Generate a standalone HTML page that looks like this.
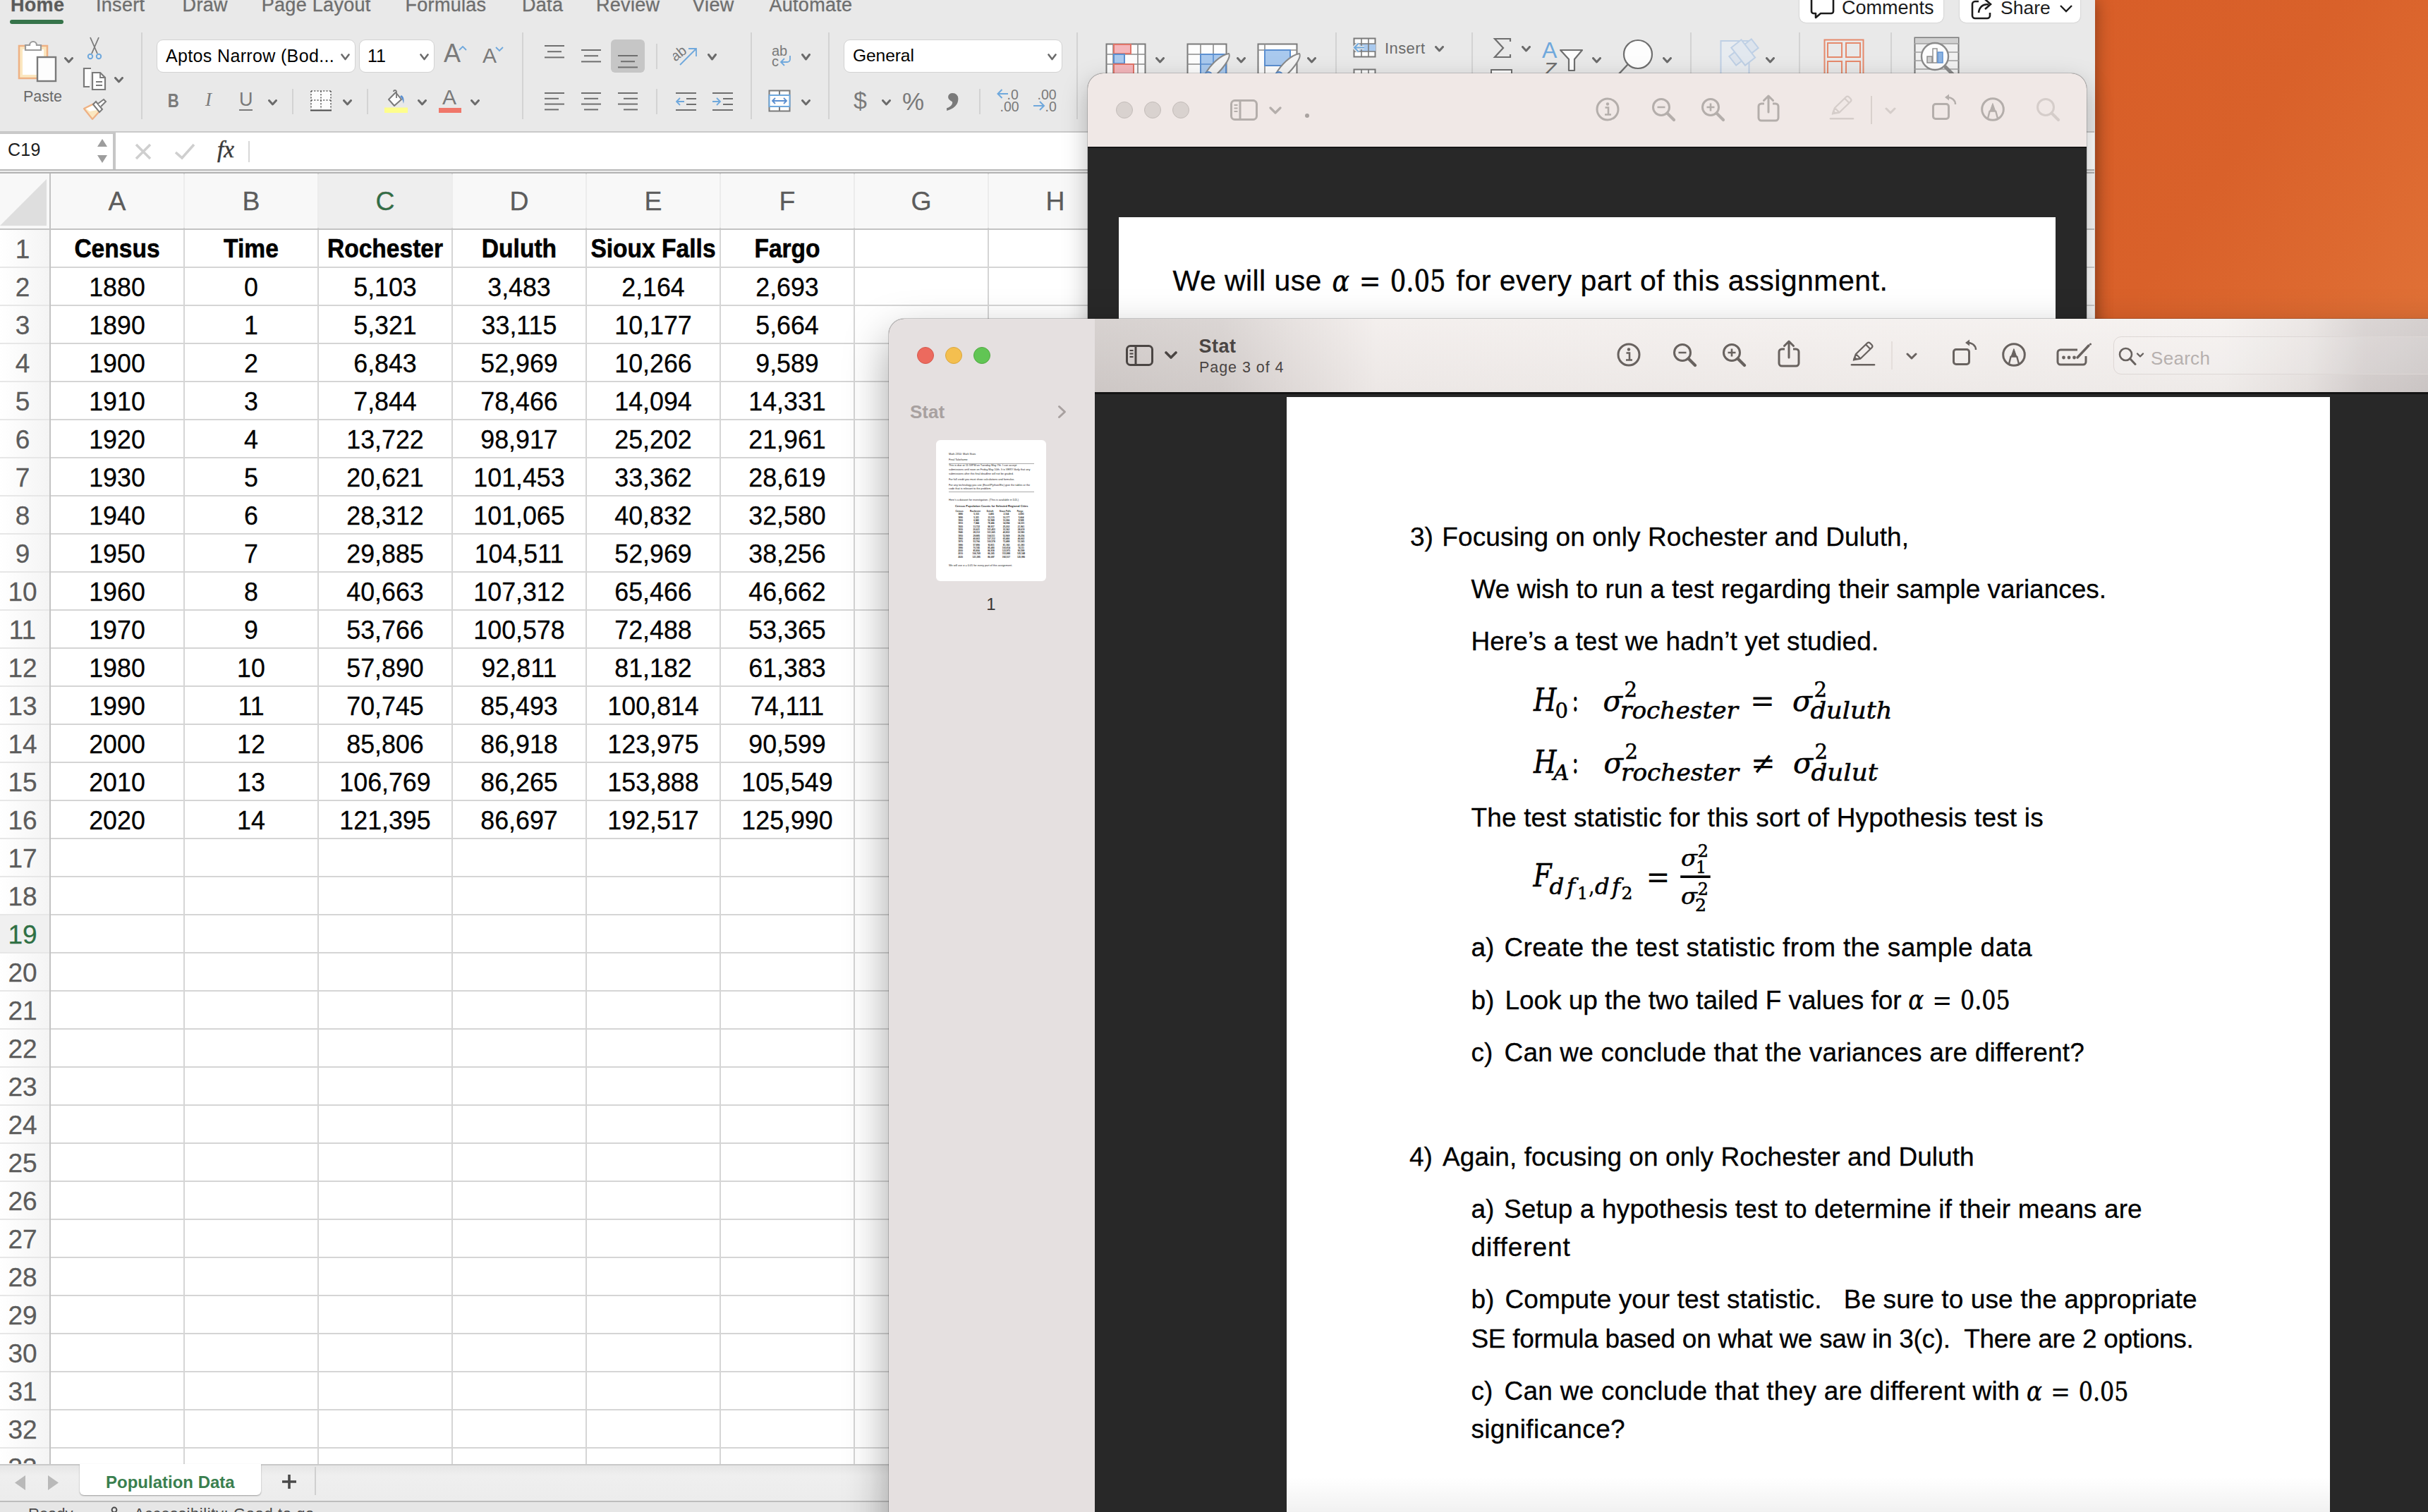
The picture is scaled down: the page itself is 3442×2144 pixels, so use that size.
<!DOCTYPE html><html><head><meta charset="utf-8"><title>Screenshot</title><style>
html,body{margin:0;padding:0}
body{width:3442px;height:2144px;position:relative;overflow:hidden;background:linear-gradient(115deg,#d95f29 0%,#d95f29 82%,#dc652e 90%,#e07035 100%);font-family:"Liberation Sans",sans-serif;}
.abs{position:absolute}
.t{position:absolute;white-space:nowrap;line-height:1}
#excel{position:absolute;left:0;top:0;width:2970px;height:2144px;background:#e9e9e9;overflow:hidden;box-shadow:0 0 22px rgba(0,0,0,.4)}
.tab{position:absolute;top:-6.5px;font-size:27px;color:#6f6f6f;white-space:nowrap;line-height:1;letter-spacing:0.3px;-webkit-text-stroke:0.35px #6f6f6f}
.sep{position:absolute;width:2px;background:#d3d3d3}
.box{position:absolute;background:#fff;border:1.5px solid #d2d2d2;border-radius:9px;box-sizing:border-box}
.gl{position:absolute;background:#d5d5d5}
.cell{position:absolute;width:250px;margin-left:-30px;text-align:center;font-size:37px;line-height:1;color:#000;white-space:nowrap;-webkit-text-stroke:0.3px #000;transform:scaleX(.967)}
.cellb{font-weight:bold;font-size:37.5px;transform:scaleX(.895);-webkit-text-stroke:0.6px #000}
.rn{position:absolute;left:-3px;width:70px;text-align:center;font-size:37px;color:#5c5c5c;line-height:1;letter-spacing:0px;-webkit-text-stroke:0.3px currentColor}
.cn{position:absolute;width:190px;text-align:center;font-size:37.4px;color:#5c5c5c;line-height:1;top:267.3px;-webkit-text-stroke:0.3px #5c5c5c}
.doc{position:absolute;white-space:nowrap;line-height:1;font-size:37px;color:#000;-webkit-text-stroke:0.3px #000}
.math{font-family:"DejaVu Serif","Liberation Serif",serif;font-style:italic}
</style></head><body>
<div class="abs" style="left:2960px;top:0;width:482px;height:460px;background:linear-gradient(125deg,#d85e28 0%,#d9612a 45%,#dd6930 75%,#e07137 100%)"></div>
<div id="excel">
<div class="tab" style="left:15.0px;font-weight:bold;color:#5a5a5a;">Home</div>
<div class="tab" style="left:136.0px;">Insert</div>
<div class="tab" style="left:258.6px;">Draw</div>
<div class="tab" style="left:370.7px;">Page Layout</div>
<div class="tab" style="left:574.5px;">Formulas</div>
<div class="tab" style="left:740.0px;">Data</div>
<div class="tab" style="left:845.0px;">Review</div>
<div class="tab" style="left:981.3px;">View</div>
<div class="tab" style="left:1090.4px;">Automate</div>
<div class="abs" style="left:14px;top:28px;width:76px;height:6px;border-radius:3px;background:#36744a"></div>
<div class="abs" style="left:2551px;top:-12px;width:204px;height:44px;background:#fff;border-radius:9px;box-shadow:0 0 2px rgba(0,0,0,.25)"></div>
<div class="t" style="left:2611px;top:-2.2px;font-size:27px;color:#1c1c1c">Comments</div>
<svg class="abs" style="left:2565px;top:0px" width="38" height="34" viewBox="0 0 38 34"><path d="M3 0 V16 a3 3 0 0 0 3 3 h3 v6 l7 -6 h15 a3 3 0 0 0 3 -3 V0" fill="none" stroke="#1c1c1c" stroke-width="2.6" stroke-linejoin="round"/></svg>
<div class="abs" style="left:2778px;top:-12px;width:171px;height:44px;background:#fff;border-radius:9px;box-shadow:0 0 2px rgba(0,0,0,.25)"></div>
<div class="t" style="left:2836px;top:-2.2px;font-size:26.5px;color:#1c1c1c">Share</div>
<svg class="abs" style="left:2793px;top:-2px" width="36" height="32" viewBox="0 0 36 32"><path d="M12 4 H7 a4 4 0 0 0 -4 4 V24 a4 4 0 0 0 4 4 H24 a4 4 0 0 0 4 -4 V20" fill="none" stroke="#1c1c1c" stroke-width="2.6"/><path d="M12 20 C13 11 19 8 26 8 M21 1 L29 8 L21 15" fill="none" stroke="#1c1c1c" stroke-width="2.6"/></svg>
<svg class="abs" style="left:2919px;top:5.5px" width="20" height="12" viewBox="0 0 20 12"><path d="M2 2 L10 10 L18 2" fill="none" stroke="#1c1c1c" stroke-width="2.4"/></svg>
<div class="sep" style="left:200px;top:46px;height:123px"></div>
<div class="sep" style="left:740px;top:46px;height:123px"></div>
<div class="sep" style="left:1064px;top:46px;height:123px"></div>
<div class="sep" style="left:1174px;top:46px;height:123px"></div>
<div class="sep" style="left:1526px;top:46px;height:123px"></div>
<div class="sep" style="left:1893px;top:46px;height:123px"></div>
<div class="sep" style="left:2086px;top:46px;height:123px"></div>
<div class="sep" style="left:2396px;top:46px;height:123px"></div>
<div class="sep" style="left:2550px;top:46px;height:123px"></div>
<div class="sep" style="left:2680px;top:46px;height:123px"></div>
<div class="sep" style="left:930px;top:62px;height:36px"></div>
<div class="sep" style="left:414px;top:126px;height:36px"></div>
<div class="sep" style="left:520px;top:126px;height:36px"></div>
<div class="sep" style="left:930px;top:126px;height:36px"></div>
<div class="sep" style="left:1388px;top:126px;height:36px"></div>
<svg class="abs" style="left:24px;top:54px" width="60" height="64" viewBox="0 0 60 64">
<rect x="3" y="11" width="40" height="46" fill="#fbe7c0" stroke="#eeb184" stroke-width="2.5"/>
<rect x="8" y="16" width="30" height="36" fill="#fff"/>
<path d="M12 17 V10 H18 a5 5 0 0 1 10 0 H34 V17 Z" fill="#fff" stroke="#9a9a9a" stroke-width="2.2"/>
<rect x="29" y="27" width="26" height="34" fill="#fdfdfd" stroke="#7a7a7a" stroke-width="2.4"/>
</svg>
<svg class="abs" style="left:90.5px;top:81.0px" width="13" height="9" viewBox="0 0 13 9"><path d="M1.5 1.5 L6.5 7.0 L11.5 1.5" fill="none" stroke="#6b6b6b" stroke-width="3.0" stroke-linecap="round" stroke-linejoin="round"/></svg>
<div class="t" style="left:33px;top:127px;font-size:21.5px;color:#6a6a6a;letter-spacing:0px">Paste</div>
<svg class="abs" style="left:122px;top:51px" width="24" height="36" viewBox="0 0 24 36">
<path d="M6 2 L16 25 M18 2 L8 25" stroke="#7a7a7a" stroke-width="1.8" fill="none"/>
<circle cx="6" cy="29" r="3.2" fill="none" stroke="#6fa8dc" stroke-width="2"/><circle cx="18" cy="29" r="3.2" fill="none" stroke="#6fa8dc" stroke-width="2"/></svg>
<svg class="abs" style="left:117px;top:95px" width="36" height="34" viewBox="0 0 36 34">
<path d="M10 28 H2 V2 H12" fill="#fdfdfd" stroke="#7a7a7a" stroke-width="2.2"/>
<path d="M14 8 H25 L32 15 V32 H14 Z" fill="#fdfdfd" stroke="#7a7a7a" stroke-width="2.2"/>
<path d="M25 8 V15 H32" fill="none" stroke="#7a7a7a" stroke-width="1.8"/>
<path d="M19 21 H28 M19 26 H28" stroke="#7a7a7a" stroke-width="1.8"/></svg>
<svg class="abs" style="left:162.0px;top:108.5px" width="13" height="9" viewBox="0 0 13 9"><path d="M1.5 1.5 L6.5 7.0 L11.5 1.5" fill="none" stroke="#6b6b6b" stroke-width="3.0" stroke-linecap="round" stroke-linejoin="round"/></svg>
<svg class="abs" style="left:117px;top:139px" width="36" height="32" viewBox="0 0 36 32">
<path d="M2 15 L16 8 L24 19 L14 30 Z" fill="#fbe7c0" stroke="#eeb184" stroke-width="2.2" stroke-linejoin="round"/>
<path d="M5 15 L16 10 L21 17 L10 19 Z" fill="#fff"/>
<path d="M15 9 L19 5 L28 16 L24 20 Z" fill="#fff" stroke="#7a7a7a" stroke-width="2"/>
<path d="M22 8 L30 2 L33 5 L26 12" fill="#fff" stroke="#7a7a7a" stroke-width="2"/></svg>
<div class="box" style="left:222px;top:56px;width:282px;height:47px"></div>
<div class="t" style="left:235px;top:67px;font-size:25px;color:#000;letter-spacing:0.35px">Aptos Narrow (Bod...</div>
<svg class="abs" style="left:482.5px;top:76.0px" width="13" height="10" viewBox="0 0 13 10"><path d="M1.5 1.5 L6.5 8.0 L11.5 1.5" fill="none" stroke="#6b6b6b" stroke-width="2.6" stroke-linecap="round" stroke-linejoin="round"/></svg>
<div class="box" style="left:509px;top:56px;width:107px;height:47px"></div>
<div class="t" style="left:521px;top:67px;font-size:25px;color:#000">11</div>
<svg class="abs" style="left:594.5px;top:76.0px" width="13" height="10" viewBox="0 0 13 10"><path d="M1.5 1.5 L6.5 8.0 L11.5 1.5" fill="none" stroke="#6b6b6b" stroke-width="2.6" stroke-linecap="round" stroke-linejoin="round"/></svg>
<div class="t" style="left:629px;top:58px;font-size:36px;color:#7a7a7a">A</div>
<svg class="abs" style="left:650px;top:65px" width="12" height="7" viewBox="0 0 12 7"><path d="M1 6 L6 1 L11 6" fill="none" stroke="#6fa8dc" stroke-width="1.8"/></svg>
<div class="t" style="left:684px;top:64px;font-size:30px;color:#7a7a7a">A</div>
<svg class="abs" style="left:702px;top:66px" width="12" height="7" viewBox="0 0 12 7"><path d="M1 1 L6 6 L11 1" fill="none" stroke="#6fa8dc" stroke-width="1.8"/></svg>
<svg class="abs" style="left:772.0px;top:64.0px" width="28" height="28"><rect x="0.0" y="0.0" width="28.0" height="2.0" fill="#6f6f6f"/><rect x="4.0" y="8.2" width="20.0" height="2.0" fill="#6f6f6f"/><rect x="0.0" y="16.4" width="28.0" height="2.0" fill="#6f6f6f"/></svg>
<svg class="abs" style="left:824.0px;top:70.0px" width="28" height="28"><rect x="0.0" y="0.0" width="28.0" height="2.0" fill="#6f6f6f"/><rect x="4.0" y="8.2" width="20.0" height="2.0" fill="#6f6f6f"/><rect x="0.0" y="16.4" width="28.0" height="2.0" fill="#6f6f6f"/></svg>
<div class="abs" style="left:866px;top:56px;width:48px;height:47px;background:#c6c6c6;border-radius:6px"></div>
<svg class="abs" style="left:876.0px;top:78.0px" width="28" height="28"><rect x="0.0" y="0.0" width="28.0" height="2.0" fill="#6f6f6f"/><rect x="4.0" y="8.2" width="20.0" height="2.0" fill="#6f6f6f"/><rect x="0.0" y="16.4" width="28.0" height="2.0" fill="#6f6f6f"/></svg>
<svg class="abs" style="left:954px;top:62px" width="36" height="32" viewBox="0 0 36 32">
<text x="0" y="20" font-size="20" fill="#7a7a7a" transform="rotate(-38 10 18)" font-family="Liberation Sans,sans-serif">ab</text>
<path d="M10 30 L32 8 M22 7 H33 V18" fill="none" stroke="#6fa8dc" stroke-width="1.8"/></svg>
<svg class="abs" style="left:1003.0px;top:76.0px" width="13" height="10" viewBox="0 0 13 10"><path d="M1.5 1.5 L6.5 8.0 L11.5 1.5" fill="none" stroke="#6b6b6b" stroke-width="3.0" stroke-linecap="round" stroke-linejoin="round"/></svg>
<div class="t" style="left:236px;top:129.5px;font-size:27px;font-weight:bold;color:#7a7a7a;transform:scaleX(.82)">B</div>
<div class="t" style="left:291px;top:128px;font-size:27px;font-style:italic;color:#7a7a7a;font-family:'Liberation Serif',serif">I</div>
<div class="t" style="left:339px;top:128px;font-size:27px;color:#7a7a7a">U</div>
<div class="abs" style="left:339px;top:155px;width:19px;height:2px;background:#7a7a7a"></div>
<svg class="abs" style="left:380.0px;top:141.0px" width="13" height="9" viewBox="0 0 13 9"><path d="M1.5 1.5 L6.5 7.0 L11.5 1.5" fill="none" stroke="#6b6b6b" stroke-width="3.0" stroke-linecap="round" stroke-linejoin="round"/></svg>
<svg class="abs" style="left:440px;top:128px" width="30" height="30" viewBox="0 0 30 30">
<rect x="1" y="1" width="28" height="26" fill="#fdfdfd"/>
<path d="M1 1 H29 M1 14 H29 M1 1 V27 M15 1 V27 M29 1 V27" stroke="#5a5a5a" stroke-width="1.6" stroke-dasharray="2 2.3" fill="none"/>
<path d="M0 28.5 H30" stroke="#4a4a4a" stroke-width="2"/></svg>
<svg class="abs" style="left:486.0px;top:141.0px" width="13" height="9" viewBox="0 0 13 9"><path d="M1.5 1.5 L6.5 7.0 L11.5 1.5" fill="none" stroke="#6b6b6b" stroke-width="3.0" stroke-linecap="round" stroke-linejoin="round"/></svg>
<svg class="abs" style="left:545px;top:127px" width="34" height="34" viewBox="0 0 34 34">
<path d="M6 14 L16 4 L24 14 L14 23 Z" fill="#fdfdfd" stroke="#7a7a7a" stroke-width="2" stroke-linejoin="round"/>
<path d="M17 12 V3 a2 2 0 0 0 -4 0" fill="none" stroke="#7a7a7a" stroke-width="1.8"/>
<path d="M24 8 C28 10 28 16 27 20 C26 15 25 12 22 10 Z" fill="#5b8fd0"/>
<rect x="0" y="25.5" width="33" height="7.5" fill="#fefe8c"/></svg>
<svg class="abs" style="left:592.0px;top:141.0px" width="13" height="9" viewBox="0 0 13 9"><path d="M1.5 1.5 L6.5 7.0 L11.5 1.5" fill="none" stroke="#6b6b6b" stroke-width="3.0" stroke-linecap="round" stroke-linejoin="round"/></svg>
<div class="t" style="left:627px;top:123px;font-size:30px;color:#7a7a7a">A</div>
<div class="abs" style="left:622px;top:152.5px;width:32px;height:7.5px;background:#f0776a"></div>
<svg class="abs" style="left:667.0px;top:141.0px" width="13" height="9" viewBox="0 0 13 9"><path d="M1.5 1.5 L6.5 7.0 L11.5 1.5" fill="none" stroke="#6b6b6b" stroke-width="3.0" stroke-linecap="round" stroke-linejoin="round"/></svg>
<svg class="abs" style="left:772.0px;top:130.5px" width="28" height="35"><rect x="0.0" y="0.0" width="28.0" height="2.0" fill="#6f6f6f"/><rect x="0.0" y="7.8" width="20.0" height="2.0" fill="#6f6f6f"/><rect x="0.0" y="15.6" width="28.0" height="2.0" fill="#6f6f6f"/><rect x="0.0" y="23.4" width="20.0" height="2.0" fill="#6f6f6f"/></svg>
<svg class="abs" style="left:824.0px;top:130.5px" width="28" height="35"><rect x="0.0" y="0.0" width="28.0" height="2.0" fill="#6f6f6f"/><rect x="4.0" y="7.8" width="20.0" height="2.0" fill="#6f6f6f"/><rect x="0.0" y="15.6" width="28.0" height="2.0" fill="#6f6f6f"/><rect x="4.0" y="23.4" width="20.0" height="2.0" fill="#6f6f6f"/></svg>
<svg class="abs" style="left:876.0px;top:130.5px" width="28" height="35"><rect x="0.0" y="0.0" width="28.0" height="2.0" fill="#6f6f6f"/><rect x="8.0" y="7.8" width="20.0" height="2.0" fill="#6f6f6f"/><rect x="0.0" y="15.6" width="28.0" height="2.0" fill="#6f6f6f"/><rect x="8.0" y="23.4" width="20.0" height="2.0" fill="#6f6f6f"/></svg>
<svg class="abs" style="left:957.5px;top:130.5px" width="30" height="28" viewBox="0 0 30 28"><rect x="0" y="0" width="29" height="2" fill="#6f6f6f"/><rect x="0" y="24" width="29" height="2" fill="#6f6f6f"/><rect x="15" y="8" width="14" height="2" fill="#6f6f6f"/><rect x="15" y="16" width="14" height="2" fill="#6f6f6f"/><path d="M12 13 H1 M6 8 L1 13 L6 18" fill="none" stroke="#6fa8dc" stroke-width="1.8"/></svg>
<svg class="abs" style="left:1009.5px;top:130.5px" width="30" height="28" viewBox="0 0 30 28"><rect x="0" y="0" width="29" height="2" fill="#6f6f6f"/><rect x="0" y="24" width="29" height="2" fill="#6f6f6f"/><rect x="15" y="8" width="14" height="2" fill="#6f6f6f"/><rect x="15" y="16" width="14" height="2" fill="#6f6f6f"/><path d="M0 13 H11 M6 8 L11 13 L6 18" fill="none" stroke="#6fa8dc" stroke-width="1.8"/></svg>
<svg class="abs" style="left:1092px;top:62px" width="34" height="36" viewBox="0 0 34 36">
<text x="2" y="17" font-size="20" fill="#7a7a7a" font-family="Liberation Sans,sans-serif">ab</text>
<text x="2" y="32" font-size="20" fill="#7a7a7a" font-family="Liberation Sans,sans-serif">c</text>
<path d="M28 17 V22 a4 4 0 0 1 -4 4 H15 M20 21 L15 26 L20 31" fill="none" stroke="#6fa8dc" stroke-width="1.8"/></svg>
<svg class="abs" style="left:1136.0px;top:76.0px" width="13" height="10" viewBox="0 0 13 10"><path d="M1.5 1.5 L6.5 8.0 L11.5 1.5" fill="none" stroke="#6b6b6b" stroke-width="3.0" stroke-linecap="round" stroke-linejoin="round"/></svg>
<svg class="abs" style="left:1089px;top:127px" width="32" height="32" viewBox="0 0 32 32">
<rect x="1.5" y="1.5" width="29" height="29" fill="#fdfdfd" stroke="#7a7a7a" stroke-width="2"/>
<path d="M16 1 V8 M16 24 V31" stroke="#7a7a7a" stroke-width="2"/>
<rect x="1.5" y="8" width="29" height="16" fill="#fdfdfd" stroke="#6fa8dc" stroke-width="2"/>
<path d="M6 16 H26 M10 12 L6 16 L10 20 M22 12 L26 16 L22 20" fill="none" stroke="#5b8fd0" stroke-width="1.8"/></svg>
<svg class="abs" style="left:1136.0px;top:141.0px" width="13" height="9" viewBox="0 0 13 9"><path d="M1.5 1.5 L6.5 7.0 L11.5 1.5" fill="none" stroke="#6b6b6b" stroke-width="3.0" stroke-linecap="round" stroke-linejoin="round"/></svg>
<div class="box" style="left:1196px;top:56px;width:310px;height:47px"></div>
<div class="t" style="left:1209px;top:67px;font-size:24.6px;color:#000;letter-spacing:-0.1px">General</div>
<svg class="abs" style="left:1484.5px;top:76.0px" width="13" height="10" viewBox="0 0 13 10"><path d="M1.5 1.5 L6.5 8.0 L11.5 1.5" fill="none" stroke="#6b6b6b" stroke-width="2.6" stroke-linecap="round" stroke-linejoin="round"/></svg>
<div class="t" style="left:1210px;top:125px;font-size:34px;color:#7a7a7a">$</div>
<svg class="abs" style="left:1250.0px;top:141.0px" width="13" height="9" viewBox="0 0 13 9"><path d="M1.5 1.5 L6.5 7.0 L11.5 1.5" fill="none" stroke="#6b6b6b" stroke-width="3.0" stroke-linecap="round" stroke-linejoin="round"/></svg>
<div class="t" style="left:1279px;top:126px;font-size:35px;color:#7a7a7a">%</div>
<div class="t" style="left:1341px;top:76.2px;font-size:82px;color:#7a7a7a;font-family:'Liberation Serif',serif;font-weight:bold">,</div>
<svg class="abs" style="left:1412px;top:124px" width="38" height="38" viewBox="0 0 38 38">
<text x="15.500" y="17" font-size="19.500" fill="#7a7a7a" font-family="Liberation Sans,sans-serif">.0</text>
<text x="5.500" y="34" font-size="19.500" fill="#7a7a7a" font-family="Liberation Sans,sans-serif">.00</text>
<path d="M17 9 H2.500 M8.500 3 L2.500 9 L8.500 15" fill="none" stroke="#6fa8dc" stroke-width="2"/></svg>
<svg class="abs" style="left:1464px;top:124px" width="38" height="38" viewBox="0 0 38 38">
<text x="6.500" y="17" font-size="19.500" fill="#7a7a7a" font-family="Liberation Sans,sans-serif">.00</text>
<text x="17.500" y="34" font-size="19.500" fill="#7a7a7a" font-family="Liberation Sans,sans-serif">.0</text>
<path d="M1 26 H16 M10 20 L16 26 L10 32" fill="none" stroke="#6fa8dc" stroke-width="2"/></svg>
<svg class="abs" style="left:1567px;top:61px" width="58" height="44" viewBox="0 0 58 44">
<rect x="1.5" y="1.5" width="55" height="50" fill="#fdfdfd" stroke="#7a7a7a" stroke-width="2"/>
<path d="M11 1 V50 M46 1 V50 M1 16 H57 M1 30 H57" stroke="#8a8a8a" stroke-width="1.6"/>
<rect x="12" y="2" width="24" height="13" fill="#f4b6bb" stroke="#e07468" stroke-width="2"/>
<rect x="12" y="16" width="15" height="13" fill="#a9c9ee" stroke="#5b8fd0" stroke-width="2"/>
<rect x="12" y="30" width="28" height="14" fill="#f4b6bb" stroke="#e07468" stroke-width="2"/></svg>
<svg class="abs" style="left:1638.0px;top:81.0px" width="13" height="9" viewBox="0 0 13 9"><path d="M1.5 1.5 L6.5 7.0 L11.5 1.5" fill="none" stroke="#6b6b6b" stroke-width="3.0" stroke-linecap="round" stroke-linejoin="round"/></svg>
<svg class="abs" style="left:1682px;top:61px" width="64" height="44" viewBox="0 0 64 44">
<rect x="1.5" y="1.5" width="55" height="50" fill="#fdfdfd" stroke="#7a7a7a" stroke-width="2"/>
<path d="M20 1 V50 M38 1 V50 M1 16 H57 M1 30 H57" stroke="#8a8a8a" stroke-width="1.6"/>
<rect x="20" y="16" width="36" height="30" fill="#a9c9ee" stroke="#5b8fd0" stroke-width="2"/>
<path d="M38 16 V44 M20 30 H56" stroke="#5b8fd0" stroke-width="1.6"/>
<path d="M25 47 C33 31 48 17 60 15 C63 19 56 32 40 47 Z" fill="#f4f4f4" stroke="#8a8a8a" stroke-width="2"/><circle cx="31" cy="46" r="5" fill="#a9c9ee" stroke="#5b8fd0" stroke-width="2"/></svg>
<svg class="abs" style="left:1753.0px;top:81.0px" width="13" height="9" viewBox="0 0 13 9"><path d="M1.5 1.5 L6.5 7.0 L11.5 1.5" fill="none" stroke="#6b6b6b" stroke-width="3.0" stroke-linecap="round" stroke-linejoin="round"/></svg>
<svg class="abs" style="left:1782px;top:61px" width="64" height="44" viewBox="0 0 64 44">
<rect x="1.5" y="1.5" width="55" height="50" fill="#fdfdfd" stroke="#7a7a7a" stroke-width="2"/>
<path d="M11 1 V50 M1 10 H57" stroke="#8a8a8a" stroke-width="1.6"/>
<rect x="11" y="10" width="36" height="22" fill="#a9c9ee" stroke="#5b8fd0" stroke-width="2"/>
<path d="M25 47 C33 31 48 17 60 15 C63 19 56 32 40 47 Z" fill="#f4f4f4" stroke="#8a8a8a" stroke-width="2"/><circle cx="31" cy="46" r="5" fill="#a9c9ee" stroke="#5b8fd0" stroke-width="2"/></svg>
<svg class="abs" style="left:1853.0px;top:81.0px" width="13" height="9" viewBox="0 0 13 9"><path d="M1.5 1.5 L6.5 7.0 L11.5 1.5" fill="none" stroke="#6b6b6b" stroke-width="3.0" stroke-linecap="round" stroke-linejoin="round"/></svg>
<svg class="abs" style="left:1918px;top:53px" width="34" height="30" viewBox="0 0 34 30">
<rect x="1.5" y="1.5" width="30" height="26" fill="#fdfdfd" stroke="#7a7a7a" stroke-width="2"/>
<rect x="9" y="9" width="23" height="11" fill="#a9c9ee"/>
<path d="M12 1 V28 M22 1 V28 M1 9 H32 M1 20 H32" stroke="#7a7a7a" stroke-width="1.6" fill="none"/>
<path d="M16 14.5 H2 M8 8.5 L2 14.5 L8 20.500" fill="none" stroke="#e9e9e9" stroke-width="5"/><path d="M16 14.5 H2 M8 8.5 L2 14.5 L8 20.500" fill="none" stroke="#6fa8dc" stroke-width="2"/></svg>
<div class="t" style="left:1963px;top:58px;font-size:22px;color:#6a6a6a;letter-spacing:0.4px">Insert</div>
<svg class="abs" style="left:2033.5px;top:65.0px" width="13" height="9" viewBox="0 0 13 9"><path d="M1.5 1.5 L6.5 7.0 L11.5 1.5" fill="none" stroke="#6b6b6b" stroke-width="3.0" stroke-linecap="round" stroke-linejoin="round"/></svg>
<svg class="abs" style="left:1918px;top:97px" width="34" height="10" viewBox="0 0 34 10">
<rect x="1.5" y="1.5" width="30" height="26" fill="#fdfdfd" stroke="#7a7a7a" stroke-width="2"/><path d="M12 1 V28 M22 1 V28" stroke="#7a7a7a" stroke-width="1.6"/></svg>
<svg class="abs" style="left:2116px;top:53px" width="28" height="30" viewBox="0 0 28 30">
<path d="M25 6 V2 H3 L15 15 L3 28 H25 V24" fill="none" stroke="#6f6f6f" stroke-width="2.2" stroke-linejoin="miter"/></svg>
<svg class="abs" style="left:2157.0px;top:65.0px" width="13" height="9" viewBox="0 0 13 9"><path d="M1.5 1.5 L6.5 7.0 L11.5 1.5" fill="none" stroke="#6b6b6b" stroke-width="3.0" stroke-linecap="round" stroke-linejoin="round"/></svg>
<div class="abs" style="left:2113px;top:98px;width:31px;height:8px;border:2.2px solid #6f6f6f;box-sizing:border-box;background:#fdfdfd"></div>
<div class="t" style="left:2186px;top:55px;font-size:32px;color:#6fa8dc">A</div>
<div class="t" style="left:2188px;top:84px;font-size:30px;color:#6f6f6f;font-style:italic">Z</div>
<svg class="abs" style="left:2210px;top:69px" width="36" height="36" viewBox="0 0 36 36">
<path d="M2 2 H33 L22 15 V31 H14 V15 Z" fill="#fdfdfd" stroke="#6f6f6f" stroke-width="2.2" stroke-linejoin="round"/></svg>
<svg class="abs" style="left:2257.0px;top:81.0px" width="13" height="9" viewBox="0 0 13 9"><path d="M1.5 1.5 L6.5 7.0 L11.5 1.5" fill="none" stroke="#6b6b6b" stroke-width="3.0" stroke-linecap="round" stroke-linejoin="round"/></svg>
<svg class="abs" style="left:2290px;top:54px" width="56" height="52" viewBox="0 0 56 52">
<path d="M18 37 L2 54" stroke="#6f6f6f" stroke-width="2.4"/><circle cx="32" cy="23" r="20" fill="#fdfdfd" stroke="#6f6f6f" stroke-width="2.2"/></svg>
<svg class="abs" style="left:2357.0px;top:81.0px" width="13" height="9" viewBox="0 0 13 9"><path d="M1.5 1.5 L6.5 7.0 L11.5 1.5" fill="none" stroke="#6b6b6b" stroke-width="3.0" stroke-linecap="round" stroke-linejoin="round"/></svg>
<svg class="abs" style="left:2438px;top:52px;opacity:.45" width="58" height="54" viewBox="0 0 58 54">
<rect x="1.5" y="6" width="40" height="50" fill="#e8f0fa" stroke="#8db4e2" stroke-width="2"/>
<g transform="rotate(-38 34 22)"><rect x="14" y="14" width="40" height="16" fill="#cfe0f3" stroke="#8db4e2" stroke-width="2"/><rect x="24" y="6" width="18" height="32" fill="#dbe8f7" stroke="#8db4e2" stroke-width="2"/></g></svg>
<svg class="abs" style="left:2503.0px;top:81.0px" width="13" height="9" viewBox="0 0 13 9"><path d="M1.5 1.5 L6.5 7.0 L11.5 1.5" fill="none" stroke="#6b6b6b" stroke-width="3.0" stroke-linecap="round" stroke-linejoin="round"/></svg>
<svg class="abs" style="left:2585px;top:55px" width="60" height="50" viewBox="0 0 60 50">
<rect x="1.5" y="1.5" width="55" height="55" fill="none" stroke="#e58a6c" stroke-width="2"/>
<rect x="6" y="6" width="20" height="20" fill="none" stroke="#e58a6c" stroke-width="2"/><rect x="32" y="6" width="20" height="20" fill="none" stroke="#e58a6c" stroke-width="2"/>
<rect x="6" y="32" width="20" height="20" fill="none" stroke="#e58a6c" stroke-width="2"/><rect x="32" y="32" width="20" height="20" fill="none" stroke="#e58a6c" stroke-width="2"/></svg>
<svg class="abs" style="left:2713px;top:52px" width="66" height="54" viewBox="0 0 66 54">
<rect x="1.5" y="1.5" width="62" height="60" fill="#f1f1f1" stroke="#7a7a7a" stroke-width="2"/>
<rect x="2" y="2" width="61" height="8" fill="#d0d0d0"/>
<path d="M1 10 H64 M1 22 H64 M1 34 H64 M1 46 H64" stroke="#a0a0a0" stroke-width="1.6"/>
<path d="M44 42 L56 54" stroke="#8a8a8a" stroke-width="5"/>
<circle cx="30" cy="28" r="19" fill="#fdfdfd" stroke="#8a8a8a" stroke-width="2.4"/>
<rect x="19" y="28" width="7" height="9" fill="#d0d0d0" stroke="#8a8a8a" stroke-width="1.4"/><rect x="27" y="17" width="6" height="20" fill="#fdfdfd" stroke="#8a8a8a" stroke-width="1.4"/><rect x="34" y="22" width="7" height="15" fill="#8db4e2" stroke="#5b8fd0" stroke-width="1.4"/></svg>
<div class="abs" style="left:0;top:186px;width:2969px;height:60px;background:#fff"></div>
<div class="abs" style="left:0;top:186px;width:162px;height:4px;background:#c9c9c9"></div>
<div class="abs" style="left:162px;top:186px;width:2807px;height:2px;background:#c9c9c9"></div>
<div class="abs" style="left:160px;top:188px;width:4px;height:52px;background:#c6c6c6"></div>
<div class="abs" style="left:0;top:240px;width:2969px;height:2px;background:#b9b9b9"></div>
<div class="abs" style="left:0;top:242px;width:2969px;height:2px;background:#ededed"></div>
<div class="abs" style="left:0;top:244px;width:2969px;height:2px;background:#b3b3b3"></div>
<div class="t" style="left:11px;top:200px;font-size:25px;color:#1c1c1c;letter-spacing:0.3px">C19</div>
<svg class="abs" style="left:137px;top:196px" width="16" height="36" viewBox="0 0 16 36"><path d="M1 12 L8 1 L15 12 Z M1 24 L8 35 L15 24 Z" fill="#9d9d9d"/></svg>
<svg class="abs" style="left:191px;top:203px" width="24" height="24" viewBox="0 0 24 24"><path d="M2 2 L22 22 M22 2 L2 22" stroke="#cfcfcf" stroke-width="3.6"/></svg>
<svg class="abs" style="left:247px;top:203px" width="30" height="24" viewBox="0 0 30 24"><path d="M2 13 L11 21 L28 2" fill="none" stroke="#cfcfcf" stroke-width="3.6"/></svg>
<div class="t" style="left:308px;top:196px;font-size:33px;color:#3a3a3a;font-family:'Liberation Serif',serif;font-style:italic;-webkit-text-stroke:0.5px #3a3a3a">fx</div>
<div class="abs" style="left:352px;top:200px;width:1.5px;height:30px;background:#d8d8d8"></div>
<div class="abs" style="left:0;top:246px;width:2969px;height:1830px;background:#fff"></div>
<div class="abs" style="left:0;top:246px;width:2969px;height:78px;background:#f8f8f8"></div>
<div class="abs" style="left:0;top:326px;width:70px;height:1750px;background:linear-gradient(90deg,#fff,#f4f4f4)"></div>
<div class="abs" style="left:452px;top:246px;width:188px;height:78px;background:#eeeeee"></div>
<div class="abs" style="left:0;top:1298px;width:70px;height:52px;background:#f0f0f0"></div>
<svg class="abs" style="left:0;top:254px" width="68" height="68" viewBox="0 0 68 68"><path d="M66 0 V66 H0 Z" fill="#dedede"/></svg>
<div class="gl" style="left:70px;top:246px;width:2px;height:1830px"></div>
<div class="gl" style="left:260px;top:246px;width:2px;height:1830px"></div>
<div class="gl" style="left:450px;top:246px;width:2px;height:1830px"></div>
<div class="gl" style="left:640px;top:246px;width:2px;height:1830px"></div>
<div class="gl" style="left:830px;top:246px;width:2px;height:1830px"></div>
<div class="gl" style="left:1020px;top:246px;width:2px;height:1830px"></div>
<div class="gl" style="left:1210px;top:246px;width:2px;height:1830px"></div>
<div class="gl" style="left:1400px;top:246px;width:2px;height:1830px"></div>
<div class="gl" style="left:1590px;top:246px;width:2px;height:1830px"></div>
<div class="gl" style="left:0;top:324px;width:2969px;height:2px"></div>
<div class="gl" style="left:0;top:378px;width:2969px;height:2px"></div>
<div class="gl" style="left:0;top:432px;width:2969px;height:2px"></div>
<div class="gl" style="left:0;top:486px;width:2969px;height:2px"></div>
<div class="gl" style="left:0;top:540px;width:2969px;height:2px"></div>
<div class="gl" style="left:0;top:594px;width:2969px;height:2px"></div>
<div class="gl" style="left:0;top:648px;width:2969px;height:2px"></div>
<div class="gl" style="left:0;top:702px;width:2969px;height:2px"></div>
<div class="gl" style="left:0;top:756px;width:2969px;height:2px"></div>
<div class="gl" style="left:0;top:810px;width:2969px;height:2px"></div>
<div class="gl" style="left:0;top:864px;width:2969px;height:2px"></div>
<div class="gl" style="left:0;top:918px;width:2969px;height:2px"></div>
<div class="gl" style="left:0;top:972px;width:2969px;height:2px"></div>
<div class="gl" style="left:0;top:1026px;width:2969px;height:2px"></div>
<div class="gl" style="left:0;top:1080px;width:2969px;height:2px"></div>
<div class="gl" style="left:0;top:1134px;width:2969px;height:2px"></div>
<div class="gl" style="left:0;top:1188px;width:2969px;height:2px"></div>
<div class="gl" style="left:0;top:1242px;width:2969px;height:2px"></div>
<div class="gl" style="left:0;top:1296px;width:2969px;height:2px"></div>
<div class="gl" style="left:0;top:1350px;width:2969px;height:2px"></div>
<div class="gl" style="left:0;top:1404px;width:2969px;height:2px"></div>
<div class="gl" style="left:0;top:1458px;width:2969px;height:2px"></div>
<div class="gl" style="left:0;top:1512px;width:2969px;height:2px"></div>
<div class="gl" style="left:0;top:1566px;width:2969px;height:2px"></div>
<div class="gl" style="left:0;top:1620px;width:2969px;height:2px"></div>
<div class="gl" style="left:0;top:1674px;width:2969px;height:2px"></div>
<div class="gl" style="left:0;top:1728px;width:2969px;height:2px"></div>
<div class="gl" style="left:0;top:1782px;width:2969px;height:2px"></div>
<div class="gl" style="left:0;top:1836px;width:2969px;height:2px"></div>
<div class="gl" style="left:0;top:1890px;width:2969px;height:2px"></div>
<div class="gl" style="left:0;top:1944px;width:2969px;height:2px"></div>
<div class="gl" style="left:0;top:1998px;width:2969px;height:2px"></div>
<div class="gl" style="left:0;top:2052px;width:2969px;height:2px"></div>
<div class="abs" style="left:0;top:378px;width:70px;height:2px;background:#e7e7e7"></div>
<div class="abs" style="left:0;top:432px;width:70px;height:2px;background:#e7e7e7"></div>
<div class="abs" style="left:0;top:486px;width:70px;height:2px;background:#e7e7e7"></div>
<div class="abs" style="left:0;top:540px;width:70px;height:2px;background:#e7e7e7"></div>
<div class="abs" style="left:0;top:594px;width:70px;height:2px;background:#e7e7e7"></div>
<div class="abs" style="left:0;top:648px;width:70px;height:2px;background:#e7e7e7"></div>
<div class="abs" style="left:0;top:702px;width:70px;height:2px;background:#e7e7e7"></div>
<div class="abs" style="left:0;top:756px;width:70px;height:2px;background:#e7e7e7"></div>
<div class="abs" style="left:0;top:810px;width:70px;height:2px;background:#e7e7e7"></div>
<div class="abs" style="left:0;top:864px;width:70px;height:2px;background:#e7e7e7"></div>
<div class="abs" style="left:0;top:918px;width:70px;height:2px;background:#e7e7e7"></div>
<div class="abs" style="left:0;top:972px;width:70px;height:2px;background:#e7e7e7"></div>
<div class="abs" style="left:0;top:1026px;width:70px;height:2px;background:#e7e7e7"></div>
<div class="abs" style="left:0;top:1080px;width:70px;height:2px;background:#e7e7e7"></div>
<div class="abs" style="left:0;top:1134px;width:70px;height:2px;background:#e7e7e7"></div>
<div class="abs" style="left:0;top:1188px;width:70px;height:2px;background:#e7e7e7"></div>
<div class="abs" style="left:0;top:1242px;width:70px;height:2px;background:#e7e7e7"></div>
<div class="abs" style="left:0;top:1296px;width:70px;height:2px;background:#e7e7e7"></div>
<div class="abs" style="left:0;top:1350px;width:70px;height:2px;background:#e7e7e7"></div>
<div class="abs" style="left:0;top:1404px;width:70px;height:2px;background:#e7e7e7"></div>
<div class="abs" style="left:0;top:1458px;width:70px;height:2px;background:#e7e7e7"></div>
<div class="abs" style="left:0;top:1512px;width:70px;height:2px;background:#e7e7e7"></div>
<div class="abs" style="left:0;top:1566px;width:70px;height:2px;background:#e7e7e7"></div>
<div class="abs" style="left:0;top:1620px;width:70px;height:2px;background:#e7e7e7"></div>
<div class="abs" style="left:0;top:1674px;width:70px;height:2px;background:#e7e7e7"></div>
<div class="abs" style="left:0;top:1728px;width:70px;height:2px;background:#e7e7e7"></div>
<div class="abs" style="left:0;top:1782px;width:70px;height:2px;background:#e7e7e7"></div>
<div class="abs" style="left:0;top:1836px;width:70px;height:2px;background:#e7e7e7"></div>
<div class="abs" style="left:0;top:1890px;width:70px;height:2px;background:#e7e7e7"></div>
<div class="abs" style="left:0;top:1944px;width:70px;height:2px;background:#e7e7e7"></div>
<div class="abs" style="left:0;top:1998px;width:70px;height:2px;background:#e7e7e7"></div>
<div class="abs" style="left:0;top:2052px;width:70px;height:2px;background:#e7e7e7"></div>
<div class="abs" style="left:70px;top:246px;width:2px;height:1830px;background:#c3c3c3"></div>
<div class="abs" style="left:0;top:324px;width:2969px;height:2px;background:#c3c3c3"></div>
<div class="abs" style="left:260px;top:247px;width:2px;height:76px;background:#ececec"></div>
<div class="abs" style="left:450px;top:247px;width:2px;height:76px;background:#ececec"></div>
<div class="abs" style="left:640px;top:247px;width:2px;height:76px;background:#ececec"></div>
<div class="abs" style="left:830px;top:247px;width:2px;height:76px;background:#ececec"></div>
<div class="abs" style="left:1020px;top:247px;width:2px;height:76px;background:#ececec"></div>
<div class="abs" style="left:1210px;top:247px;width:2px;height:76px;background:#ececec"></div>
<div class="abs" style="left:1400px;top:247px;width:2px;height:76px;background:#ececec"></div>
<div class="abs" style="left:1590px;top:247px;width:2px;height:76px;background:#ececec"></div>
<div class="cn" style="left:71px;color:#5c5c5c">A</div>
<div class="cn" style="left:261px;color:#5c5c5c">B</div>
<div class="cn" style="left:451px;color:#2f7044">C</div>
<div class="cn" style="left:641px;color:#5c5c5c">D</div>
<div class="cn" style="left:831px;color:#5c5c5c">E</div>
<div class="cn" style="left:1021px;color:#5c5c5c">F</div>
<div class="cn" style="left:1211px;color:#5c5c5c">G</div>
<div class="cn" style="left:1401px;color:#5c5c5c">H</div>
<div class="rn" style="top:335px;color:#5c5c5c">1</div>
<div class="rn" style="top:389px;color:#5c5c5c">2</div>
<div class="rn" style="top:443px;color:#5c5c5c">3</div>
<div class="rn" style="top:497px;color:#5c5c5c">4</div>
<div class="rn" style="top:551px;color:#5c5c5c">5</div>
<div class="rn" style="top:605px;color:#5c5c5c">6</div>
<div class="rn" style="top:659px;color:#5c5c5c">7</div>
<div class="rn" style="top:713px;color:#5c5c5c">8</div>
<div class="rn" style="top:767px;color:#5c5c5c">9</div>
<div class="rn" style="top:821px;color:#5c5c5c">10</div>
<div class="rn" style="top:875px;color:#5c5c5c">11</div>
<div class="rn" style="top:929px;color:#5c5c5c">12</div>
<div class="rn" style="top:983px;color:#5c5c5c">13</div>
<div class="rn" style="top:1037px;color:#5c5c5c">14</div>
<div class="rn" style="top:1091px;color:#5c5c5c">15</div>
<div class="rn" style="top:1145px;color:#5c5c5c">16</div>
<div class="rn" style="top:1199px;color:#5c5c5c">17</div>
<div class="rn" style="top:1253px;color:#5c5c5c">18</div>
<div class="rn" style="top:1307px;color:#2f7044">19</div>
<div class="rn" style="top:1361px;color:#5c5c5c">20</div>
<div class="rn" style="top:1415px;color:#5c5c5c">21</div>
<div class="rn" style="top:1469px;color:#5c5c5c">22</div>
<div class="rn" style="top:1523px;color:#5c5c5c">23</div>
<div class="rn" style="top:1577px;color:#5c5c5c">24</div>
<div class="rn" style="top:1631px;color:#5c5c5c">25</div>
<div class="rn" style="top:1685px;color:#5c5c5c">26</div>
<div class="rn" style="top:1739px;color:#5c5c5c">27</div>
<div class="rn" style="top:1793px;color:#5c5c5c">28</div>
<div class="rn" style="top:1847px;color:#5c5c5c">29</div>
<div class="rn" style="top:1901px;color:#5c5c5c">30</div>
<div class="rn" style="top:1955px;color:#5c5c5c">31</div>
<div class="rn" style="top:2009px;color:#5c5c5c">32</div>
<div class="rn" style="top:2063px;color:#5c5c5c">33</div>
<div class="cell cellb" style="left:71px;top:334.4px">Census</div>
<div class="cell cellb" style="left:261px;top:334.4px">Time</div>
<div class="cell cellb" style="left:451px;top:334.4px">Rochester</div>
<div class="cell cellb" style="left:641px;top:334.4px">Duluth</div>
<div class="cell cellb" style="left:831px;top:334.4px">Sioux Falls</div>
<div class="cell cellb" style="left:1021px;top:334.4px">Fargo</div>
<div class="cell" style="left:71px;top:389.0px">1880</div>
<div class="cell" style="left:261px;top:389.0px">0</div>
<div class="cell" style="left:451px;top:389.0px">5,103</div>
<div class="cell" style="left:641px;top:389.0px">3,483</div>
<div class="cell" style="left:831px;top:389.0px">2,164</div>
<div class="cell" style="left:1021px;top:389.0px">2,693</div>
<div class="cell" style="left:71px;top:443.0px">1890</div>
<div class="cell" style="left:261px;top:443.0px">1</div>
<div class="cell" style="left:451px;top:443.0px">5,321</div>
<div class="cell" style="left:641px;top:443.0px">33,115</div>
<div class="cell" style="left:831px;top:443.0px">10,177</div>
<div class="cell" style="left:1021px;top:443.0px">5,664</div>
<div class="cell" style="left:71px;top:497.0px">1900</div>
<div class="cell" style="left:261px;top:497.0px">2</div>
<div class="cell" style="left:451px;top:497.0px">6,843</div>
<div class="cell" style="left:641px;top:497.0px">52,969</div>
<div class="cell" style="left:831px;top:497.0px">10,266</div>
<div class="cell" style="left:1021px;top:497.0px">9,589</div>
<div class="cell" style="left:71px;top:551.0px">1910</div>
<div class="cell" style="left:261px;top:551.0px">3</div>
<div class="cell" style="left:451px;top:551.0px">7,844</div>
<div class="cell" style="left:641px;top:551.0px">78,466</div>
<div class="cell" style="left:831px;top:551.0px">14,094</div>
<div class="cell" style="left:1021px;top:551.0px">14,331</div>
<div class="cell" style="left:71px;top:605.0px">1920</div>
<div class="cell" style="left:261px;top:605.0px">4</div>
<div class="cell" style="left:451px;top:605.0px">13,722</div>
<div class="cell" style="left:641px;top:605.0px">98,917</div>
<div class="cell" style="left:831px;top:605.0px">25,202</div>
<div class="cell" style="left:1021px;top:605.0px">21,961</div>
<div class="cell" style="left:71px;top:659.0px">1930</div>
<div class="cell" style="left:261px;top:659.0px">5</div>
<div class="cell" style="left:451px;top:659.0px">20,621</div>
<div class="cell" style="left:641px;top:659.0px">101,453</div>
<div class="cell" style="left:831px;top:659.0px">33,362</div>
<div class="cell" style="left:1021px;top:659.0px">28,619</div>
<div class="cell" style="left:71px;top:713.0px">1940</div>
<div class="cell" style="left:261px;top:713.0px">6</div>
<div class="cell" style="left:451px;top:713.0px">28,312</div>
<div class="cell" style="left:641px;top:713.0px">101,065</div>
<div class="cell" style="left:831px;top:713.0px">40,832</div>
<div class="cell" style="left:1021px;top:713.0px">32,580</div>
<div class="cell" style="left:71px;top:767.0px">1950</div>
<div class="cell" style="left:261px;top:767.0px">7</div>
<div class="cell" style="left:451px;top:767.0px">29,885</div>
<div class="cell" style="left:641px;top:767.0px">104,511</div>
<div class="cell" style="left:831px;top:767.0px">52,969</div>
<div class="cell" style="left:1021px;top:767.0px">38,256</div>
<div class="cell" style="left:71px;top:821.0px">1960</div>
<div class="cell" style="left:261px;top:821.0px">8</div>
<div class="cell" style="left:451px;top:821.0px">40,663</div>
<div class="cell" style="left:641px;top:821.0px">107,312</div>
<div class="cell" style="left:831px;top:821.0px">65,466</div>
<div class="cell" style="left:1021px;top:821.0px">46,662</div>
<div class="cell" style="left:71px;top:875.0px">1970</div>
<div class="cell" style="left:261px;top:875.0px">9</div>
<div class="cell" style="left:451px;top:875.0px">53,766</div>
<div class="cell" style="left:641px;top:875.0px">100,578</div>
<div class="cell" style="left:831px;top:875.0px">72,488</div>
<div class="cell" style="left:1021px;top:875.0px">53,365</div>
<div class="cell" style="left:71px;top:929.0px">1980</div>
<div class="cell" style="left:261px;top:929.0px">10</div>
<div class="cell" style="left:451px;top:929.0px">57,890</div>
<div class="cell" style="left:641px;top:929.0px">92,811</div>
<div class="cell" style="left:831px;top:929.0px">81,182</div>
<div class="cell" style="left:1021px;top:929.0px">61,383</div>
<div class="cell" style="left:71px;top:983.0px">1990</div>
<div class="cell" style="left:261px;top:983.0px">11</div>
<div class="cell" style="left:451px;top:983.0px">70,745</div>
<div class="cell" style="left:641px;top:983.0px">85,493</div>
<div class="cell" style="left:831px;top:983.0px">100,814</div>
<div class="cell" style="left:1021px;top:983.0px">74,111</div>
<div class="cell" style="left:71px;top:1037.0px">2000</div>
<div class="cell" style="left:261px;top:1037.0px">12</div>
<div class="cell" style="left:451px;top:1037.0px">85,806</div>
<div class="cell" style="left:641px;top:1037.0px">86,918</div>
<div class="cell" style="left:831px;top:1037.0px">123,975</div>
<div class="cell" style="left:1021px;top:1037.0px">90,599</div>
<div class="cell" style="left:71px;top:1091.0px">2010</div>
<div class="cell" style="left:261px;top:1091.0px">13</div>
<div class="cell" style="left:451px;top:1091.0px">106,769</div>
<div class="cell" style="left:641px;top:1091.0px">86,265</div>
<div class="cell" style="left:831px;top:1091.0px">153,888</div>
<div class="cell" style="left:1021px;top:1091.0px">105,549</div>
<div class="cell" style="left:71px;top:1145.0px">2020</div>
<div class="cell" style="left:261px;top:1145.0px">14</div>
<div class="cell" style="left:451px;top:1145.0px">121,395</div>
<div class="cell" style="left:641px;top:1145.0px">86,697</div>
<div class="cell" style="left:831px;top:1145.0px">192,517</div>
<div class="cell" style="left:1021px;top:1145.0px">125,990</div>
<div class="abs" style="left:0;top:2076px;width:2969px;height:53px;background:linear-gradient(#e4e4e4,#efefef 30%,#ececec)"></div>
<div class="abs" style="left:0;top:2076px;width:2969px;height:2px;background:#c9c9c9"></div>
<div class="abs" style="left:113px;top:2076px;width:257px;height:44px;background:#fff;border-radius:0 0 6px 6px;box-shadow:0 1px 2px rgba(0,0,0,.35)"></div>
<div class="t" style="left:150px;top:2090px;font-size:24px;font-weight:bold;color:#3a7f4f">Population Data</div>
<svg class="abs" style="left:400px;top:2091px" width="20" height="20" viewBox="0 0 20 20"><path d="M10 0 V20 M0 10 H20" stroke="#4a4a4a" stroke-width="3.6"/></svg>
<div class="abs" style="left:446px;top:2080px;width:2px;height:40px;background:#d0d0d0"></div>
<svg class="abs" style="left:21px;top:2092px" width="64" height="22" viewBox="0 0 64 22"><path d="M15 0 V21 L0 10.5 Z M47 0 V21 L62 10.5 Z" fill="#b9b9b9"/></svg>
<div class="abs" style="left:0;top:2129px;width:2969px;height:15px;background:#e6e6e6"></div>
<div class="abs" style="left:0;top:2128px;width:2969px;height:2px;background:#bdbdbd"></div>
<div class="t" style="left:40px;top:2136.3px;font-size:22px;color:#4a4a4a">Ready</div>
<div class="t" style="left:190px;top:2136.3px;font-size:22px;color:#4a4a4a;letter-spacing:0.6px">Accessibility: Good to go</div>
<svg class="abs" style="left:147px;top:2135.5px" width="30" height="14" viewBox="0 0 30 14"><circle cx="15" cy="5" r="3.4" fill="none" stroke="#4a4a4a" stroke-width="2"/><path d="M2 12 C8 8 22 8 28 12" fill="none" stroke="#4a4a4a" stroke-width="2"/></svg>
</div>
<div id="pv1" class="abs" style="left:1542px;top:104px;width:1416px;height:700px;background:#282828;border-radius:22px 22px 0 0;overflow:hidden;box-shadow:0 14px 36px rgba(0,0,0,.26),0 0 0 1px rgba(0,0,0,.16)">
<div class="abs" style="left:0;top:0;width:1416px;height:104px;background:#f0e8e6"></div>
<div class="abs" style="left:0;top:104px;width:1416px;height:1.5px;background:#161616"></div>
<div class="abs" style="left:40px;top:40px;width:22px;height:22px;border-radius:50%;background:#d9d2cf;border:1px solid #c3bcb9"></div>
<div class="abs" style="left:80px;top:40px;width:22px;height:22px;border-radius:50%;background:#d9d2cf;border:1px solid #c3bcb9"></div>
<div class="abs" style="left:120px;top:40px;width:22px;height:22px;border-radius:50%;background:#d9d2cf;border:1px solid #c3bcb9"></div>
<svg class="abs" style="left:202.0px;top:37.0px" width="39" height="30" viewBox="0 0 39 30"><rect x="1.5" y="1.5" width="36" height="27" rx="5" fill="none" stroke="#b4aeab" stroke-width="3.0"/><path d="M14 1.5 V28.5" stroke="#b4aeab" stroke-width="3.0"/><path d="M5.5 8 H10.5 M5.5 12.5 H10.5 M5.5 17 H10.5" stroke="#b4aeab" stroke-width="2"/></svg>
<svg class="abs" style="left:256.5px;top:46.5px" width="18" height="12" viewBox="0 0 18 12"><path d="M2 2 L9.0 9.0 L16.0 2" fill="none" stroke="#b4aeab" stroke-width="3.2" stroke-linecap="round" stroke-linejoin="round"/></svg>
<div class="abs" style="left:308px;top:57px;width:6px;height:6px;border-radius:50%;background:#a9a3a0"></div>
<svg class="abs" style="left:719.0px;top:33.0px" width="36" height="36" viewBox="0 0 36 36"><circle cx="18" cy="18" r="15" fill="none" stroke="#b4aeab" stroke-width="3"/><circle cx="18" cy="10.5" r="2.2" fill="#b4aeab"/><path d="M14.5 15.5 H19 V25 M14 25.5 H23" fill="none" stroke="#b4aeab" stroke-width="2.6"/></svg>
<svg class="abs" style="left:799.0px;top:34.0px" width="36" height="36" viewBox="0 0 36 36"><circle cx="14" cy="14" r="11.5" fill="none" stroke="#b4aeab" stroke-width="3"/><path d="M22.5 22.5 L32 32" stroke="#b4aeab" stroke-width="4.2" stroke-linecap="round"/><path d="M8.5 14 H19.5" stroke="#b4aeab" stroke-width="2.6"/></svg>
<svg class="abs" style="left:868.5px;top:34.0px" width="36" height="36" viewBox="0 0 36 36"><circle cx="14" cy="14" r="11.5" fill="none" stroke="#b4aeab" stroke-width="3"/><path d="M22.5 22.5 L32 32" stroke="#b4aeab" stroke-width="4.2" stroke-linecap="round"/><path d="M8.5 14 H19.5" stroke="#b4aeab" stroke-width="2.6"/><path d="M14 8.5 V19.5" stroke="#b4aeab" stroke-width="2.6"/></svg>
<svg class="abs" style="left:948.5px;top:30.0px" width="32" height="40" viewBox="0 0 32 40"><path d="M10 13 H6 a4 4 0 0 0 -4 4 V33 a4 4 0 0 0 4 4 H26 a4 4 0 0 0 4 -4 V17 a4 4 0 0 0 -4 -4 H22" fill="none" stroke="#b4aeab" stroke-width="3"/><path d="M16 25 V2.5 M9.5 8.5 L16 2 L22.5 8.5" fill="none" stroke="#b4aeab" stroke-width="3" stroke-linecap="round" stroke-linejoin="round"/></svg>
<svg class="abs" style="left:1051.0px;top:31.0px" width="36" height="36" viewBox="0 0 36 36"><path d="M2 33.300 H34" stroke="#d5cdca" stroke-width="2.6" stroke-linecap="round"/><path d="M5 26 L8 18 L24 2.500 a3 3 0 0 1 4 0 L30.500 5 a3 3 0 0 1 0 4 L14.500 24.500 Z M22 4.500 L28.500 11 M8 18 L14.500 24.500" fill="none" stroke="#d5cdca" stroke-width="2.3" stroke-linejoin="round"/><path d="M3.500 28 L6.500 21.500 L10.500 25.500 Z" fill="#d5cdca"/></svg>
<div class="abs" style="left:1110px;top:32px;width:1.5px;height:40px;background:#d8d0cd"></div>
<svg class="abs" style="left:1130.0px;top:48.0px" width="16" height="11" viewBox="0 0 16 11"><path d="M2 2 L8.0 8.0 L14.0 2" fill="none" stroke="#d5cdca" stroke-width="3.0" stroke-linecap="round" stroke-linejoin="round"/></svg>
<svg class="abs" style="left:1197.0px;top:29.0px" width="36" height="38" viewBox="0 0 36 38"><rect x="1.5" y="14.5" width="22" height="21" rx="3.5" fill="none" stroke="#b4aeab" stroke-width="3"/><path d="M21 5 C28 5 33 9 33 15" fill="none" stroke="#b4aeab" stroke-width="2.4"/><path d="M24 0.500 L18 5 L24 9.500 Z" fill="#b4aeab"/></svg>
<svg class="abs" style="left:1265.0px;top:33.0px" width="36" height="36" viewBox="0 0 36 36"><circle cx="18" cy="18" r="15.3" fill="none" stroke="#b4aeab" stroke-width="3"/><path d="M11 31 L13.600 20.600 H22.200 L25 31" fill="none" stroke="#b4aeab" stroke-width="2.4" stroke-linejoin="round"/><path d="M14 20.600 L17.900 9.600 L21.800 20.600 Z" fill="#b4aeab" stroke="#b4aeab" stroke-width="1" stroke-linejoin="round"/></svg>
<svg class="abs" style="left:1343.5px;top:34.0px" width="36" height="36" viewBox="0 0 36 36"><circle cx="14" cy="14" r="11.5" fill="none" stroke="#d5cdca" stroke-width="3"/><path d="M22.5 22.5 L32 32" stroke="#d5cdca" stroke-width="4.2" stroke-linecap="round"/></svg>
<div class="abs" style="left:44px;top:204px;width:1328px;height:400px;background:#fff"></div>
<div class="doc" style="left:120.6px;top:273.9px;font-size:41px;letter-spacing:0.420px;">We will use</div>
<div class="doc" style="left:522.5px;top:273.9px;font-size:41px;letter-spacing:0.505px;">for every part of this assignment.</div>
<svg class="abs" style="left:44px;top:204px" width="1328" height="200" viewBox="1586 308 1328 200" font-family="DejaVu Serif, Liberation Serif, serif" fill="#000" stroke="#000" stroke-width="0.55"><text x="1888.5" y="413.0" font-size="43.5" font-style="italic" textLength="24.5" lengthAdjust="spacingAndGlyphs">α</text><text x="1926.4" y="414.1" font-size="44.6" stroke="none" textLength="31.2" lengthAdjust="spacingAndGlyphs">=</text><text x="1970.8" y="413.0" font-size="42.4" font-family="DejaVu Serif Condensed, DejaVu Serif, serif" textLength="78.8" lengthAdjust="spacingAndGlyphs">0.05</text></svg>
</div>
<div id="pv2" class="abs" style="left:1260px;top:452px;width:2300px;height:1800px;background:#282828;border-radius:22px 0 0 0;overflow:hidden;box-shadow:0 26px 62px rgba(0,0,0,.36),0 0 0 1px rgba(0,0,0,.18)">
<div class="abs" style="left:0;top:0;width:292px;height:1800px;background:#e5e0e0"></div>
<div class="abs" style="left:40px;top:40px;width:22px;height:22px;border-radius:50%;background:#ec6a5e;border:1px solid #d5584d"></div>
<div class="abs" style="left:80px;top:40px;width:22px;height:22px;border-radius:50%;background:#f4bf4f;border:1px solid #d9a63d"></div>
<div class="abs" style="left:120px;top:40px;width:22px;height:22px;border-radius:50%;background:#61c554;border:1px solid #52a843"></div>
<div class="t" style="left:30px;top:119px;font-size:26px;font-weight:bold;color:#a8a1a0">Stat</div>
<svg class="abs" style="left:239px;top:122px" width="14" height="20" viewBox="0 0 14 20"><path d="M2.500 2.500 L10.500 10 L2.500 17.500" fill="none" stroke="#a8a1a0" stroke-width="3" stroke-linecap="round" stroke-linejoin="round"/></svg>
<div id="thumb" class="abs" style="left:67px;top:172px;width:156px;height:200px;background:#fff;border-radius:6px;overflow:hidden">
<div style="font-size:3.8px;color:#222;line-height:1;white-space:nowrap;position:absolute;left:18px;font-weight:normal;top:19.0px;">Math 2350: Math Stats</div>
<div style="font-size:3.8px;color:#222;line-height:1;white-space:nowrap;position:absolute;left:18px;font-weight:normal;top:27.0px;">Final Takehome</div>
<div class="abs" style="left:18px;top:33px;width:121px;height:0.5px;background:#aaa"></div>
<div style="font-size:3.8px;color:#222;line-height:1;white-space:nowrap;position:absolute;left:18px;font-weight:normal;top:35.0px;">This is due at 11:59PM on Tuesday May 7th.  I can accept</div>
<div style="font-size:3.8px;color:#222;line-height:1;white-space:nowrap;position:absolute;left:18px;font-weight:normal;top:41.0px;">submissions until noon on Friday May 10th.  It is VERY likely that any</div>
<div style="font-size:3.8px;color:#222;line-height:1;white-space:nowrap;position:absolute;left:18px;font-weight:normal;top:46.5px;">submissions after this final deadline will not be graded.</div>
<div style="font-size:3.8px;color:#222;line-height:1;white-space:nowrap;position:absolute;left:18px;font-weight:normal;top:54.5px;">For full credit you must show calculations and formulas.</div>
<div style="font-size:3.8px;color:#222;line-height:1;white-space:nowrap;position:absolute;left:18px;font-weight:normal;top:62.5px;">For any technology you use (Excel/Python/Etc) give the tables or the</div>
<div style="font-size:3.8px;color:#222;line-height:1;white-space:nowrap;position:absolute;left:18px;font-weight:normal;top:68.0px;">code that is relevant to the problem.</div>
<div class="abs" style="left:18px;top:72.500px;width:121px;height:0.5px;background:#aaa"></div>
<div style="font-size:3.8px;color:#222;line-height:1;white-space:nowrap;position:absolute;left:18px;font-weight:normal;top:84.0px;">Here’s a dataset for investigation.  (This is available in D2L)</div>
<div style="font-size:3.8px;color:#222;line-height:1;white-space:nowrap;position:absolute;left:18px;font-weight:normal;top:91.5px;left:27px;font-weight:bold;font-size:3.95px">Census Population Counts for Selected Regional Cities</div>
<div style="font-size:3.8px;color:#222;line-height:1;white-space:nowrap;position:absolute;left:18px;font-weight:normal;top:99.500px;left:27.6px;font-size:3.1px;width:14px;text-align:center;font-weight:bold;overflow:visible;text-indent:-3px">Census</div>
<div style="font-size:3.8px;color:#222;line-height:1;white-space:nowrap;position:absolute;left:18px;font-weight:normal;top:99.500px;left:50.2px;font-size:3.1px;width:14px;text-align:center;font-weight:bold;overflow:visible;text-indent:-3px">Rochester</div>
<div style="font-size:3.8px;color:#222;line-height:1;white-space:nowrap;position:absolute;left:18px;font-weight:normal;top:99.500px;left:71.1px;font-size:3.1px;width:14px;text-align:center;font-weight:bold;overflow:visible;text-indent:-3px">Duluth</div>
<div style="font-size:3.8px;color:#222;line-height:1;white-space:nowrap;position:absolute;left:18px;font-weight:normal;top:99.500px;left:92.4px;font-size:3.1px;width:14px;text-align:center;font-weight:bold;overflow:visible;text-indent:-3px">Sioux Falls</div>
<div style="font-size:3.8px;color:#222;line-height:1;white-space:nowrap;position:absolute;left:18px;font-weight:normal;top:99.500px;left:113.5px;font-size:3.1px;width:14px;text-align:center;font-weight:bold;overflow:visible;text-indent:-3px">Fargo</div>
<div style="font-size:3.8px;color:#222;line-height:1;white-space:nowrap;position:absolute;left:18px;font-weight:normal;top:104.2px;left:27.6px;font-size:3.1px;width:14px;text-align:center;font-weight:bold">1880</div>
<div style="font-size:3.8px;color:#222;line-height:1;white-space:nowrap;position:absolute;left:18px;font-weight:normal;top:104.2px;left:50.2px;font-size:3.1px;width:14px;text-align:center;font-weight:bold">5,103</div>
<div style="font-size:3.8px;color:#222;line-height:1;white-space:nowrap;position:absolute;left:18px;font-weight:normal;top:104.2px;left:71.1px;font-size:3.1px;width:14px;text-align:center;font-weight:bold">3,483</div>
<div style="font-size:3.8px;color:#222;line-height:1;white-space:nowrap;position:absolute;left:18px;font-weight:normal;top:104.2px;left:92.4px;font-size:3.1px;width:14px;text-align:center;font-weight:bold">2,164</div>
<div style="font-size:3.8px;color:#222;line-height:1;white-space:nowrap;position:absolute;left:18px;font-weight:normal;top:104.2px;left:113.5px;font-size:3.1px;width:14px;text-align:center;font-weight:bold">2,693</div>
<div style="font-size:3.8px;color:#222;line-height:1;white-space:nowrap;position:absolute;left:18px;font-weight:normal;top:108.5px;left:27.6px;font-size:3.1px;width:14px;text-align:center;font-weight:bold">1890</div>
<div style="font-size:3.8px;color:#222;line-height:1;white-space:nowrap;position:absolute;left:18px;font-weight:normal;top:108.5px;left:50.2px;font-size:3.1px;width:14px;text-align:center;font-weight:bold">5,321</div>
<div style="font-size:3.8px;color:#222;line-height:1;white-space:nowrap;position:absolute;left:18px;font-weight:normal;top:108.5px;left:71.1px;font-size:3.1px;width:14px;text-align:center;font-weight:bold">33,115</div>
<div style="font-size:3.8px;color:#222;line-height:1;white-space:nowrap;position:absolute;left:18px;font-weight:normal;top:108.5px;left:92.4px;font-size:3.1px;width:14px;text-align:center;font-weight:bold">10,177</div>
<div style="font-size:3.8px;color:#222;line-height:1;white-space:nowrap;position:absolute;left:18px;font-weight:normal;top:108.5px;left:113.5px;font-size:3.1px;width:14px;text-align:center;font-weight:bold">5,664</div>
<div style="font-size:3.8px;color:#222;line-height:1;white-space:nowrap;position:absolute;left:18px;font-weight:normal;top:112.9px;left:27.6px;font-size:3.1px;width:14px;text-align:center;font-weight:bold">1900</div>
<div style="font-size:3.8px;color:#222;line-height:1;white-space:nowrap;position:absolute;left:18px;font-weight:normal;top:112.9px;left:50.2px;font-size:3.1px;width:14px;text-align:center;font-weight:bold">6,843</div>
<div style="font-size:3.8px;color:#222;line-height:1;white-space:nowrap;position:absolute;left:18px;font-weight:normal;top:112.9px;left:71.1px;font-size:3.1px;width:14px;text-align:center;font-weight:bold">52,969</div>
<div style="font-size:3.8px;color:#222;line-height:1;white-space:nowrap;position:absolute;left:18px;font-weight:normal;top:112.9px;left:92.4px;font-size:3.1px;width:14px;text-align:center;font-weight:bold">10,266</div>
<div style="font-size:3.8px;color:#222;line-height:1;white-space:nowrap;position:absolute;left:18px;font-weight:normal;top:112.9px;left:113.5px;font-size:3.1px;width:14px;text-align:center;font-weight:bold">9,589</div>
<div style="font-size:3.8px;color:#222;line-height:1;white-space:nowrap;position:absolute;left:18px;font-weight:normal;top:117.2px;left:27.6px;font-size:3.1px;width:14px;text-align:center;font-weight:bold">1910</div>
<div style="font-size:3.8px;color:#222;line-height:1;white-space:nowrap;position:absolute;left:18px;font-weight:normal;top:117.2px;left:50.2px;font-size:3.1px;width:14px;text-align:center;font-weight:bold">7,844</div>
<div style="font-size:3.8px;color:#222;line-height:1;white-space:nowrap;position:absolute;left:18px;font-weight:normal;top:117.2px;left:71.1px;font-size:3.1px;width:14px;text-align:center;font-weight:bold">78,466</div>
<div style="font-size:3.8px;color:#222;line-height:1;white-space:nowrap;position:absolute;left:18px;font-weight:normal;top:117.2px;left:92.4px;font-size:3.1px;width:14px;text-align:center;font-weight:bold">14,094</div>
<div style="font-size:3.8px;color:#222;line-height:1;white-space:nowrap;position:absolute;left:18px;font-weight:normal;top:117.2px;left:113.5px;font-size:3.1px;width:14px;text-align:center;font-weight:bold">14,331</div>
<div style="font-size:3.8px;color:#222;line-height:1;white-space:nowrap;position:absolute;left:18px;font-weight:normal;top:121.5px;left:27.6px;font-size:3.1px;width:14px;text-align:center;font-weight:bold">1920</div>
<div style="font-size:3.8px;color:#222;line-height:1;white-space:nowrap;position:absolute;left:18px;font-weight:normal;top:121.5px;left:50.2px;font-size:3.1px;width:14px;text-align:center;font-weight:bold">13,722</div>
<div style="font-size:3.8px;color:#222;line-height:1;white-space:nowrap;position:absolute;left:18px;font-weight:normal;top:121.5px;left:71.1px;font-size:3.1px;width:14px;text-align:center;font-weight:bold">98,917</div>
<div style="font-size:3.8px;color:#222;line-height:1;white-space:nowrap;position:absolute;left:18px;font-weight:normal;top:121.5px;left:92.4px;font-size:3.1px;width:14px;text-align:center;font-weight:bold">25,202</div>
<div style="font-size:3.8px;color:#222;line-height:1;white-space:nowrap;position:absolute;left:18px;font-weight:normal;top:121.5px;left:113.5px;font-size:3.1px;width:14px;text-align:center;font-weight:bold">21,961</div>
<div style="font-size:3.8px;color:#222;line-height:1;white-space:nowrap;position:absolute;left:18px;font-weight:normal;top:125.8px;left:27.6px;font-size:3.1px;width:14px;text-align:center;font-weight:bold">1930</div>
<div style="font-size:3.8px;color:#222;line-height:1;white-space:nowrap;position:absolute;left:18px;font-weight:normal;top:125.8px;left:50.2px;font-size:3.1px;width:14px;text-align:center;font-weight:bold">20,621</div>
<div style="font-size:3.8px;color:#222;line-height:1;white-space:nowrap;position:absolute;left:18px;font-weight:normal;top:125.8px;left:71.1px;font-size:3.1px;width:14px;text-align:center;font-weight:bold">101,453</div>
<div style="font-size:3.8px;color:#222;line-height:1;white-space:nowrap;position:absolute;left:18px;font-weight:normal;top:125.8px;left:92.4px;font-size:3.1px;width:14px;text-align:center;font-weight:bold">33,362</div>
<div style="font-size:3.8px;color:#222;line-height:1;white-space:nowrap;position:absolute;left:18px;font-weight:normal;top:125.8px;left:113.5px;font-size:3.1px;width:14px;text-align:center;font-weight:bold">28,619</div>
<div style="font-size:3.8px;color:#222;line-height:1;white-space:nowrap;position:absolute;left:18px;font-weight:normal;top:130.2px;left:27.6px;font-size:3.1px;width:14px;text-align:center;font-weight:bold">1940</div>
<div style="font-size:3.8px;color:#222;line-height:1;white-space:nowrap;position:absolute;left:18px;font-weight:normal;top:130.2px;left:50.2px;font-size:3.1px;width:14px;text-align:center;font-weight:bold">28,312</div>
<div style="font-size:3.8px;color:#222;line-height:1;white-space:nowrap;position:absolute;left:18px;font-weight:normal;top:130.2px;left:71.1px;font-size:3.1px;width:14px;text-align:center;font-weight:bold">101,065</div>
<div style="font-size:3.8px;color:#222;line-height:1;white-space:nowrap;position:absolute;left:18px;font-weight:normal;top:130.2px;left:92.4px;font-size:3.1px;width:14px;text-align:center;font-weight:bold">40,832</div>
<div style="font-size:3.8px;color:#222;line-height:1;white-space:nowrap;position:absolute;left:18px;font-weight:normal;top:130.2px;left:113.5px;font-size:3.1px;width:14px;text-align:center;font-weight:bold">32,580</div>
<div style="font-size:3.8px;color:#222;line-height:1;white-space:nowrap;position:absolute;left:18px;font-weight:normal;top:134.5px;left:27.6px;font-size:3.1px;width:14px;text-align:center;font-weight:bold">1950</div>
<div style="font-size:3.8px;color:#222;line-height:1;white-space:nowrap;position:absolute;left:18px;font-weight:normal;top:134.5px;left:50.2px;font-size:3.1px;width:14px;text-align:center;font-weight:bold">29,885</div>
<div style="font-size:3.8px;color:#222;line-height:1;white-space:nowrap;position:absolute;left:18px;font-weight:normal;top:134.5px;left:71.1px;font-size:3.1px;width:14px;text-align:center;font-weight:bold">104,511</div>
<div style="font-size:3.8px;color:#222;line-height:1;white-space:nowrap;position:absolute;left:18px;font-weight:normal;top:134.5px;left:92.4px;font-size:3.1px;width:14px;text-align:center;font-weight:bold">52,969</div>
<div style="font-size:3.8px;color:#222;line-height:1;white-space:nowrap;position:absolute;left:18px;font-weight:normal;top:134.5px;left:113.5px;font-size:3.1px;width:14px;text-align:center;font-weight:bold">38,256</div>
<div style="font-size:3.8px;color:#222;line-height:1;white-space:nowrap;position:absolute;left:18px;font-weight:normal;top:138.8px;left:27.6px;font-size:3.1px;width:14px;text-align:center;font-weight:bold">1960</div>
<div style="font-size:3.8px;color:#222;line-height:1;white-space:nowrap;position:absolute;left:18px;font-weight:normal;top:138.8px;left:50.2px;font-size:3.1px;width:14px;text-align:center;font-weight:bold">40,663</div>
<div style="font-size:3.8px;color:#222;line-height:1;white-space:nowrap;position:absolute;left:18px;font-weight:normal;top:138.8px;left:71.1px;font-size:3.1px;width:14px;text-align:center;font-weight:bold">107,312</div>
<div style="font-size:3.8px;color:#222;line-height:1;white-space:nowrap;position:absolute;left:18px;font-weight:normal;top:138.8px;left:92.4px;font-size:3.1px;width:14px;text-align:center;font-weight:bold">65,466</div>
<div style="font-size:3.8px;color:#222;line-height:1;white-space:nowrap;position:absolute;left:18px;font-weight:normal;top:138.8px;left:113.5px;font-size:3.1px;width:14px;text-align:center;font-weight:bold">46,662</div>
<div style="font-size:3.8px;color:#222;line-height:1;white-space:nowrap;position:absolute;left:18px;font-weight:normal;top:143.1px;left:27.6px;font-size:3.1px;width:14px;text-align:center;font-weight:bold">1970</div>
<div style="font-size:3.8px;color:#222;line-height:1;white-space:nowrap;position:absolute;left:18px;font-weight:normal;top:143.1px;left:50.2px;font-size:3.1px;width:14px;text-align:center;font-weight:bold">53,766</div>
<div style="font-size:3.8px;color:#222;line-height:1;white-space:nowrap;position:absolute;left:18px;font-weight:normal;top:143.1px;left:71.1px;font-size:3.1px;width:14px;text-align:center;font-weight:bold">100,578</div>
<div style="font-size:3.8px;color:#222;line-height:1;white-space:nowrap;position:absolute;left:18px;font-weight:normal;top:143.1px;left:92.4px;font-size:3.1px;width:14px;text-align:center;font-weight:bold">72,488</div>
<div style="font-size:3.8px;color:#222;line-height:1;white-space:nowrap;position:absolute;left:18px;font-weight:normal;top:143.1px;left:113.5px;font-size:3.1px;width:14px;text-align:center;font-weight:bold">53,365</div>
<div style="font-size:3.8px;color:#222;line-height:1;white-space:nowrap;position:absolute;left:18px;font-weight:normal;top:147.5px;left:27.6px;font-size:3.1px;width:14px;text-align:center;font-weight:bold">1980</div>
<div style="font-size:3.8px;color:#222;line-height:1;white-space:nowrap;position:absolute;left:18px;font-weight:normal;top:147.5px;left:50.2px;font-size:3.1px;width:14px;text-align:center;font-weight:bold">57,890</div>
<div style="font-size:3.8px;color:#222;line-height:1;white-space:nowrap;position:absolute;left:18px;font-weight:normal;top:147.5px;left:71.1px;font-size:3.1px;width:14px;text-align:center;font-weight:bold">92,811</div>
<div style="font-size:3.8px;color:#222;line-height:1;white-space:nowrap;position:absolute;left:18px;font-weight:normal;top:147.5px;left:92.4px;font-size:3.1px;width:14px;text-align:center;font-weight:bold">81,182</div>
<div style="font-size:3.8px;color:#222;line-height:1;white-space:nowrap;position:absolute;left:18px;font-weight:normal;top:147.5px;left:113.5px;font-size:3.1px;width:14px;text-align:center;font-weight:bold">61,383</div>
<div style="font-size:3.8px;color:#222;line-height:1;white-space:nowrap;position:absolute;left:18px;font-weight:normal;top:151.8px;left:27.6px;font-size:3.1px;width:14px;text-align:center;font-weight:bold">1990</div>
<div style="font-size:3.8px;color:#222;line-height:1;white-space:nowrap;position:absolute;left:18px;font-weight:normal;top:151.8px;left:50.2px;font-size:3.1px;width:14px;text-align:center;font-weight:bold">70,745</div>
<div style="font-size:3.8px;color:#222;line-height:1;white-space:nowrap;position:absolute;left:18px;font-weight:normal;top:151.8px;left:71.1px;font-size:3.1px;width:14px;text-align:center;font-weight:bold">85,493</div>
<div style="font-size:3.8px;color:#222;line-height:1;white-space:nowrap;position:absolute;left:18px;font-weight:normal;top:151.8px;left:92.4px;font-size:3.1px;width:14px;text-align:center;font-weight:bold">100,814</div>
<div style="font-size:3.8px;color:#222;line-height:1;white-space:nowrap;position:absolute;left:18px;font-weight:normal;top:151.8px;left:113.5px;font-size:3.1px;width:14px;text-align:center;font-weight:bold">74,111</div>
<div style="font-size:3.8px;color:#222;line-height:1;white-space:nowrap;position:absolute;left:18px;font-weight:normal;top:156.1px;left:27.6px;font-size:3.1px;width:14px;text-align:center;font-weight:bold">2000</div>
<div style="font-size:3.8px;color:#222;line-height:1;white-space:nowrap;position:absolute;left:18px;font-weight:normal;top:156.1px;left:50.2px;font-size:3.1px;width:14px;text-align:center;font-weight:bold">85,806</div>
<div style="font-size:3.8px;color:#222;line-height:1;white-space:nowrap;position:absolute;left:18px;font-weight:normal;top:156.1px;left:71.1px;font-size:3.1px;width:14px;text-align:center;font-weight:bold">86,918</div>
<div style="font-size:3.8px;color:#222;line-height:1;white-space:nowrap;position:absolute;left:18px;font-weight:normal;top:156.1px;left:92.4px;font-size:3.1px;width:14px;text-align:center;font-weight:bold">123,975</div>
<div style="font-size:3.8px;color:#222;line-height:1;white-space:nowrap;position:absolute;left:18px;font-weight:normal;top:156.1px;left:113.5px;font-size:3.1px;width:14px;text-align:center;font-weight:bold">90,599</div>
<div style="font-size:3.8px;color:#222;line-height:1;white-space:nowrap;position:absolute;left:18px;font-weight:normal;top:160.4px;left:27.6px;font-size:3.1px;width:14px;text-align:center;font-weight:bold">2010</div>
<div style="font-size:3.8px;color:#222;line-height:1;white-space:nowrap;position:absolute;left:18px;font-weight:normal;top:160.4px;left:50.2px;font-size:3.1px;width:14px;text-align:center;font-weight:bold">106,769</div>
<div style="font-size:3.8px;color:#222;line-height:1;white-space:nowrap;position:absolute;left:18px;font-weight:normal;top:160.4px;left:71.1px;font-size:3.1px;width:14px;text-align:center;font-weight:bold">86,265</div>
<div style="font-size:3.8px;color:#222;line-height:1;white-space:nowrap;position:absolute;left:18px;font-weight:normal;top:160.4px;left:92.4px;font-size:3.1px;width:14px;text-align:center;font-weight:bold">153,888</div>
<div style="font-size:3.8px;color:#222;line-height:1;white-space:nowrap;position:absolute;left:18px;font-weight:normal;top:160.4px;left:113.5px;font-size:3.1px;width:14px;text-align:center;font-weight:bold">105,549</div>
<div style="font-size:3.8px;color:#222;line-height:1;white-space:nowrap;position:absolute;left:18px;font-weight:normal;top:164.8px;left:27.6px;font-size:3.1px;width:14px;text-align:center;font-weight:bold">2020</div>
<div style="font-size:3.8px;color:#222;line-height:1;white-space:nowrap;position:absolute;left:18px;font-weight:normal;top:164.8px;left:50.2px;font-size:3.1px;width:14px;text-align:center;font-weight:bold">121,395</div>
<div style="font-size:3.8px;color:#222;line-height:1;white-space:nowrap;position:absolute;left:18px;font-weight:normal;top:164.8px;left:71.1px;font-size:3.1px;width:14px;text-align:center;font-weight:bold">86,697</div>
<div style="font-size:3.8px;color:#222;line-height:1;white-space:nowrap;position:absolute;left:18px;font-weight:normal;top:164.8px;left:92.4px;font-size:3.1px;width:14px;text-align:center;font-weight:bold">192,517</div>
<div style="font-size:3.8px;color:#222;line-height:1;white-space:nowrap;position:absolute;left:18px;font-weight:normal;top:164.8px;left:113.5px;font-size:3.1px;width:14px;text-align:center;font-weight:bold">125,990</div>
<div style="font-size:3.8px;color:#222;line-height:1;white-space:nowrap;position:absolute;left:18px;font-weight:normal;top:176.5px;">We will use α = 0.05 for every part of this assignment.</div>
</div>
<div class="t" style="left:67px;top:393px;font-size:24px;color:#3a3634;width:156px;text-align:center">1</div>
<div class="abs" style="left:292px;top:0;width:2010px;height:104.5px;background:linear-gradient(90deg,#d2ccca 0px,#d6d0ce 180px,#e4dedc 280px,#f2edeb 400px,#f4f0ee 1600px,#e9e4e2 1720px,#d6d0cf 1800px,#cfc9c8 1890px)"></div>
<div class="abs" style="left:292px;top:0;width:2010px;height:104px;background:linear-gradient(rgba(255,255,255,.12),rgba(0,0,0,.025))"></div>
<div class="abs" style="left:292px;top:104px;width:2010px;height:3px;background:#141414"></div>
<svg class="abs" style="left:336.0px;top:37.0px" width="39" height="30" viewBox="0 0 39 30"><rect x="1.5" y="1.5" width="36" height="27" rx="5" fill="none" stroke="#4a4543" stroke-width="3.0"/><path d="M14 1.5 V28.5" stroke="#4a4543" stroke-width="3.0"/><path d="M5.5 8 H10.5 M5.5 12.5 H10.5 M5.5 17 H10.5" stroke="#4a4543" stroke-width="2"/></svg>
<svg class="abs" style="left:390.5px;top:46.0px" width="18" height="12" viewBox="0 0 18 12"><path d="M2 2 L9.0 9.0 L16.0 2" fill="none" stroke="#4a4543" stroke-width="3.6" stroke-linecap="round" stroke-linejoin="round"/></svg>
<div class="t" style="left:439.5px;top:25.7px;font-size:27px;font-weight:bold;color:#4a4543;letter-spacing:0.5px">Stat</div>
<div class="t" style="left:440.0px;top:58.5px;font-size:21.500px;color:#4a4543;letter-spacing:0.95px">Page 3 of 4</div>
<svg class="abs" style="left:1030.7px;top:33.3px" width="36" height="36" viewBox="0 0 36 36"><circle cx="18" cy="18" r="15" fill="none" stroke="#68625f" stroke-width="3"/><circle cx="18" cy="10.5" r="2.2" fill="#68625f"/><path d="M14.5 15.5 H19 V25 M14 25.5 H23" fill="none" stroke="#68625f" stroke-width="2.6"/></svg>
<svg class="abs" style="left:1111.0px;top:33.5px" width="36" height="36" viewBox="0 0 36 36"><circle cx="14" cy="14" r="11.5" fill="none" stroke="#68625f" stroke-width="3"/><path d="M22.5 22.5 L32 32" stroke="#68625f" stroke-width="4.2" stroke-linecap="round"/><path d="M8.5 14 H19.5" stroke="#68625f" stroke-width="2.6"/></svg>
<svg class="abs" style="left:1180.5px;top:33.5px" width="36" height="36" viewBox="0 0 36 36"><circle cx="14" cy="14" r="11.5" fill="none" stroke="#68625f" stroke-width="3"/><path d="M22.5 22.5 L32 32" stroke="#68625f" stroke-width="4.2" stroke-linecap="round"/><path d="M8.5 14 H19.5" stroke="#68625f" stroke-width="2.6"/><path d="M14 8.5 V19.5" stroke="#68625f" stroke-width="2.6"/></svg>
<svg class="abs" style="left:1259.5px;top:30.0px" width="32" height="40" viewBox="0 0 32 40"><path d="M10 13 H6 a4 4 0 0 0 -4 4 V33 a4 4 0 0 0 4 4 H26 a4 4 0 0 0 4 -4 V17 a4 4 0 0 0 -4 -4 H22" fill="none" stroke="#68625f" stroke-width="3"/><path d="M16 25 V2.5 M9.5 8.5 L16 2 L22.5 8.5" fill="none" stroke="#68625f" stroke-width="3" stroke-linecap="round" stroke-linejoin="round"/></svg>
<svg class="abs" style="left:1362.5px;top:32.0px" width="36" height="36" viewBox="0 0 36 36"><path d="M2 33.300 H34" stroke="#68625f" stroke-width="2.6" stroke-linecap="round"/><path d="M5 26 L8 18 L24 2.500 a3 3 0 0 1 4 0 L30.500 5 a3 3 0 0 1 0 4 L14.500 24.500 Z M22 4.500 L28.500 11 M8 18 L14.500 24.500" fill="none" stroke="#68625f" stroke-width="2.3" stroke-linejoin="round"/><path d="M3.500 28 L6.500 21.500 L10.500 25.500 Z" fill="#68625f"/></svg>
<div class="abs" style="left:1421.0px;top:32px;width:2px;height:40px;background:#e4dedb"></div>
<svg class="abs" style="left:1441.5px;top:47.5px" width="16" height="11" viewBox="0 0 16 11"><path d="M2 2 L8.0 8.0 L14.0 2" fill="none" stroke="#68625f" stroke-width="3.0" stroke-linecap="round" stroke-linejoin="round"/></svg>
<svg class="abs" style="left:1508.0px;top:29.0px" width="36" height="38" viewBox="0 0 36 38"><rect x="1.5" y="14.5" width="22" height="21" rx="3.5" fill="none" stroke="#68625f" stroke-width="3"/><path d="M21 5 C28 5 33 9 33 15" fill="none" stroke="#68625f" stroke-width="2.4"/><path d="M24 0.500 L18 5 L24 9.500 Z" fill="#68625f"/></svg>
<svg class="abs" style="left:1577.0px;top:33.3px" width="36" height="36" viewBox="0 0 36 36"><circle cx="18" cy="18" r="15.3" fill="none" stroke="#68625f" stroke-width="3"/><path d="M11 31 L13.600 20.600 H22.200 L25 31" fill="none" stroke="#68625f" stroke-width="2.4" stroke-linejoin="round"/><path d="M14 20.600 L17.900 9.600 L21.800 20.600 Z" fill="#68625f" stroke="#68625f" stroke-width="1" stroke-linejoin="round"/></svg>
<svg class="abs" style="left:1654.5px;top:34.0px" width="52" height="34" viewBox="0 0 52 34"><path d="M30 10 H6 a4 4 0 0 0 -4 4 V27 a4 4 0 0 0 4 4 H38 a4 4 0 0 0 4 -4 V19" fill="none" stroke="#68625f" stroke-width="3"/><circle cx="10.500" cy="21" r="2.4" fill="#68625f"/><circle cx="18" cy="21" r="2.4" fill="#68625f"/><circle cx="25.500" cy="21" r="2.4" fill="#68625f"/><path d="M30 21 L46 4" stroke="#68625f" stroke-width="3.4" stroke-linecap="round"/><circle cx="48.500" cy="2" r="1.6" fill="#68625f"/></svg>
<div class="abs" style="left:1735.5px;top:24.5px;width:600px;height:54px;border:1.5px solid #ddd7d5;border-radius:11px;box-sizing:border-box;background:rgba(255,255,255,.1)"></div>
<svg class="abs" style="left:1742.5px;top:39.5px" width="40" height="28" viewBox="0 0 40 28"><circle cx="10.500" cy="10.500" r="8.500" fill="none" stroke="#68625f" stroke-width="2.6"/><path d="M16.500 16.500 L24 24.500" stroke="#68625f" stroke-width="3" stroke-linecap="round"/><path d="M27 9.500 L31 13.500 L35 9.500" fill="none" stroke="#68625f" stroke-width="2.4" stroke-linecap="round" stroke-linejoin="round"/></svg>
<div class="t" style="left:1789px;top:42.5px;font-size:26px;color:#b6b0ae;letter-spacing:0.3px">Search</div>
<div class="abs" style="left:564px;top:111px;width:1479px;height:1700px;background:#fff"></div>
<div class="doc" style="left:739.0px;top:291.0px;font-size:37px;">3)</div>
<div class="doc" style="left:784.3px;top:291.0px;font-size:37px;letter-spacing:0.095px;">Focusing on only Rochester and Duluth,</div>
<div class="doc" style="left:825.4px;top:364.8px;font-size:37px;letter-spacing:-0.029px;">We wish to run a test regarding their sample variances.</div>
<div class="doc" style="left:825.4px;top:439.0px;font-size:37px;letter-spacing:0.074px;">Here’s a test we hadn’t yet studied.</div>
<div class="doc" style="left:825.4px;top:688.7px;font-size:37px;letter-spacing:0.176px;">The test statistic for this sort of Hypothesis test is</div>
<div class="doc" style="left:825.4px;top:873.1px;font-size:37px;">a)</div>
<div class="doc" style="left:872.5px;top:873.1px;font-size:37px;letter-spacing:0.307px;">Create the test statistic from the sample data</div>
<div class="doc" style="left:825.4px;top:947.5px;font-size:37px;">b)</div>
<div class="doc" style="left:873.5px;top:947.5px;font-size:37px;letter-spacing:-0.043px;">Look up the two tailed F values for</div>
<div class="doc" style="left:825.4px;top:1021.9px;font-size:37px;">c)</div>
<div class="doc" style="left:872.5px;top:1021.9px;font-size:37px;letter-spacing:0.178px;">Can we conclude that the variances are different?</div>
<div class="doc" style="left:738.0px;top:1170.0px;font-size:37px;">4)</div>
<div class="doc" style="left:785.0px;top:1170.0px;font-size:37px;letter-spacing:0.068px;">Again, focusing on only Rochester and Duluth</div>
<div class="doc" style="left:825.4px;top:1243.7px;font-size:37px;">a)</div>
<div class="doc" style="left:872.0px;top:1243.7px;font-size:37px;letter-spacing:0.148px;">Setup a hypothesis test to determine if their means are</div>
<div class="doc" style="left:825.4px;top:1297.7px;font-size:37px;letter-spacing:0.934px;">different</div>
<div class="doc" style="left:825.4px;top:1372.2px;font-size:37px;">b)</div>
<div class="doc" style="left:873.5px;top:1372.2px;font-size:37px;letter-spacing:0.103px;">Compute your test statistic.&nbsp;&nbsp; Be sure to use the appropriate</div>
<div class="doc" style="left:825.4px;top:1427.7px;font-size:37px;letter-spacing:-0.289px;">SE formula based on what we saw in 3(c).&nbsp; There are 2 options.</div>
<div class="doc" style="left:825.4px;top:1502.0px;font-size:37px;">c)</div>
<div class="doc" style="left:872.5px;top:1502.0px;font-size:37px;letter-spacing:0.267px;">Can we conclude that they are different with</div>
<div class="doc" style="left:825.4px;top:1556.1px;font-size:37px;letter-spacing:0.366px;">significance?</div>
<div class="abs" style="left:564px;top:1642px;width:1479px;height:50px;background:linear-gradient(rgba(0,0,0,0),rgba(0,0,0,.055))"></div>
<svg class="abs" style="left:564px;top:111px" width="1479" height="1581" viewBox="1824 563 1479 1581" font-family="DejaVu Serif, Liberation Serif, serif" fill="#000" stroke="#000" stroke-width="0.55"><text x="2174.0" y="1007.7" font-size="44.0" font-style="italic" textLength="32.5" lengthAdjust="spacingAndGlyphs">H</text><text x="2204.5" y="1017.8" font-size="30.0" textLength="18.5" lengthAdjust="spacingAndGlyphs">0</text><text x="2228.5" y="1007.7" font-size="44.0" textLength="9.5" lengthAdjust="spacingAndGlyphs">:</text><text x="2272.5" y="1007.7" font-size="41.0" font-style="italic" textLength="27.5" lengthAdjust="spacingAndGlyphs">σ</text><text x="2302.5" y="988.2" font-size="29.2" textLength="18.5" lengthAdjust="spacingAndGlyphs">2</text><text x="2297.0" y="1019.1" font-size="33.0" font-style="italic" textLength="167.0" lengthAdjust="spacingAndGlyphs">rochester</text><text x="2481.0" y="1009.2" font-size="44.0" stroke="none" textLength="35.0" lengthAdjust="spacingAndGlyphs">=</text><text x="2541.0" y="1007.7" font-size="41.0" font-style="italic" textLength="28.0" lengthAdjust="spacingAndGlyphs">σ</text><text x="2571.5" y="988.2" font-size="29.2" textLength="18.5" lengthAdjust="spacingAndGlyphs">2</text><text x="2566.5" y="1019.1" font-size="33.0" font-style="italic" textLength="116.0" lengthAdjust="spacingAndGlyphs">duluth</text><text x="2174.0" y="1095.7" font-size="44.0" font-style="italic" textLength="32.5" lengthAdjust="spacingAndGlyphs">H</text><text x="2202.0" y="1105.8" font-size="30.0" font-style="italic" textLength="22.5" lengthAdjust="spacingAndGlyphs">A</text><text x="2228.5" y="1095.7" font-size="44.0" textLength="9.5" lengthAdjust="spacingAndGlyphs">:</text><text x="2273.5" y="1095.7" font-size="41.0" font-style="italic" textLength="27.5" lengthAdjust="spacingAndGlyphs">σ</text><text x="2303.5" y="1076.2" font-size="29.2" textLength="18.5" lengthAdjust="spacingAndGlyphs">2</text><text x="2298.0" y="1107.1" font-size="33.0" font-style="italic" textLength="167.0" lengthAdjust="spacingAndGlyphs">rochester</text><text x="2482.0" y="1097.2" font-size="44.0" stroke="none" textLength="35.0" lengthAdjust="spacingAndGlyphs">≠</text><text x="2542.0" y="1095.7" font-size="41.0" font-style="italic" textLength="28.0" lengthAdjust="spacingAndGlyphs">σ</text><text x="2572.5" y="1076.2" font-size="29.2" textLength="18.5" lengthAdjust="spacingAndGlyphs">2</text><text x="2567.5" y="1107.1" font-size="33.0" font-style="italic" textLength="94.5" lengthAdjust="spacingAndGlyphs">dulut</text><text x="2173.5" y="1257.2" font-size="44.0" font-style="italic" textLength="26.0" lengthAdjust="spacingAndGlyphs">F</text><text x="2196.5" y="1267.7" font-size="32.5" font-style="italic">d</text><text x="2221.0" y="1267.7" font-size="32.5" font-style="italic">f</text><text x="2236.0" y="1274.9" font-size="24.5" textLength="15.0" lengthAdjust="spacingAndGlyphs">1</text><text x="2252.5" y="1267.7" font-size="32.5" textLength="7.5" lengthAdjust="spacingAndGlyphs">,</text><text x="2261.0" y="1267.7" font-size="32.5" font-style="italic">d</text><text x="2285.0" y="1267.7" font-size="32.5" font-style="italic">f</text><text x="2298.5" y="1274.9" font-size="24.5" textLength="16.0" lengthAdjust="spacingAndGlyphs">2</text><text x="2333.5" y="1258.5" font-size="44.0" stroke="none" textLength="34.0" lengthAdjust="spacingAndGlyphs">=</text><rect x="2382.2" y="1241.4" width="42.5" height="3.6" stroke="none"/><text x="2383.0" y="1228.2" font-size="31.5" font-style="italic" textLength="23.0" lengthAdjust="spacingAndGlyphs">σ</text><text x="2406.8" y="1215.2" font-size="24.5" textLength="15.2" lengthAdjust="spacingAndGlyphs">2</text><text x="2404.0" y="1237.8" font-size="24.5" textLength="15.0" lengthAdjust="spacingAndGlyphs">1</text><text x="2383.0" y="1282.0" font-size="31.5" font-style="italic" textLength="23.0" lengthAdjust="spacingAndGlyphs">σ</text><text x="2406.8" y="1269.2" font-size="24.5" textLength="15.2" lengthAdjust="spacingAndGlyphs">2</text><text x="2403.0" y="1291.8" font-size="24.5" textLength="16.0" lengthAdjust="spacingAndGlyphs">2</text><text x="2705.2" y="1431.0" font-size="39.0" font-style="italic" textLength="22.0" lengthAdjust="spacingAndGlyphs">α</text><text x="2739.2" y="1432.0" font-size="40.0" stroke="none" textLength="28.0" lengthAdjust="spacingAndGlyphs">=</text><text x="2779.0" y="1431.0" font-size="38.0" font-family="DejaVu Serif Condensed, DejaVu Serif, serif" textLength="70.7" lengthAdjust="spacingAndGlyphs">0.05</text><text x="2873.0" y="1985.5" font-size="39.0" font-style="italic" textLength="22.0" lengthAdjust="spacingAndGlyphs">α</text><text x="2907.0" y="1986.5" font-size="40.0" stroke="none" textLength="28.0" lengthAdjust="spacingAndGlyphs">=</text><text x="2946.8" y="1985.5" font-size="38.0" font-family="DejaVu Serif Condensed, DejaVu Serif, serif" textLength="70.7" lengthAdjust="spacingAndGlyphs">0.05</text></svg>
</div>
</body></html>
